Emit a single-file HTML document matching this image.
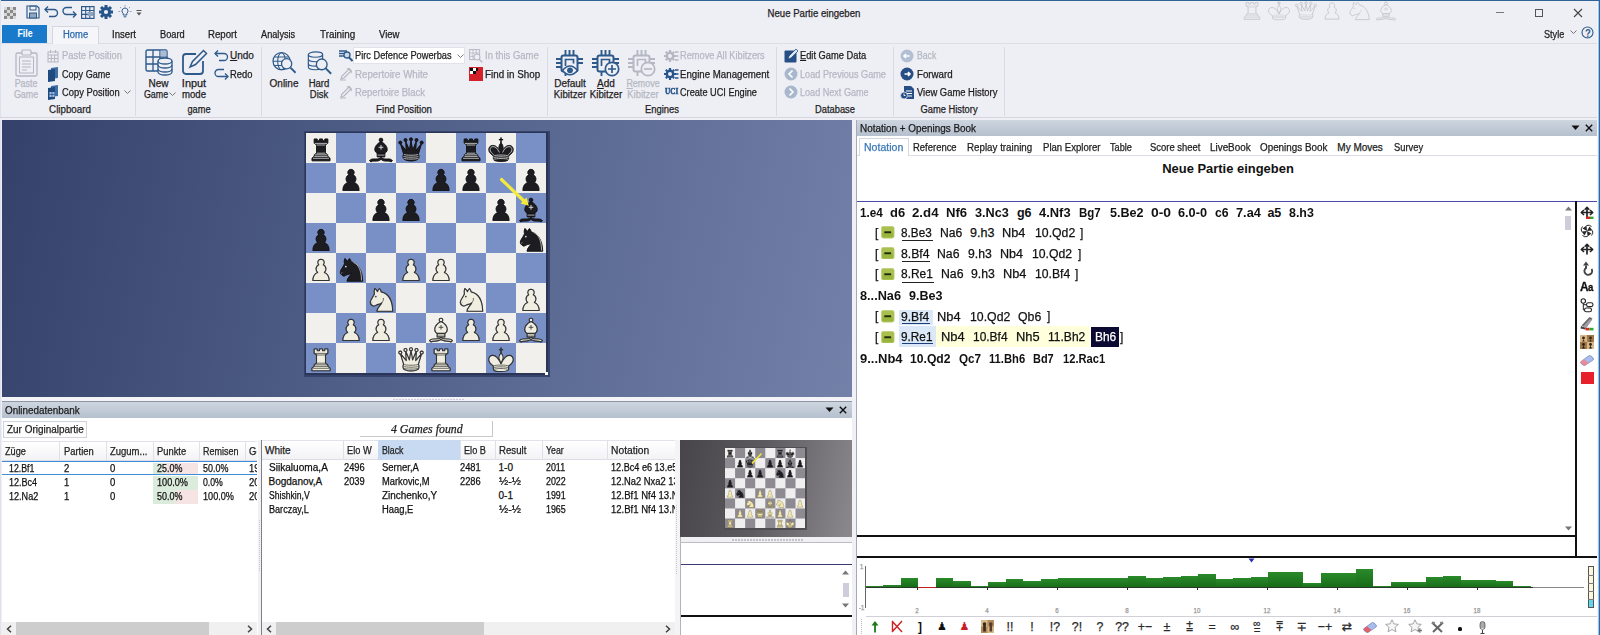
<!DOCTYPE html>
<html><head><meta charset="utf-8"><title>Neue Partie eingeben</title><style>
html,body{margin:0;padding:0;}
body{width:1600px;height:635px;overflow:hidden;position:relative;background:#eeeef5;font-family:"Liberation Sans",sans-serif;}
.t{position:absolute;white-space:nowrap;line-height:16px;height:16px;-webkit-text-stroke:0.25px currentColor;}
.r{position:absolute;display:block;}
.pc{position:absolute;font-family:"DejaVu Sans",sans-serif;text-align:center;}
</style></head><body>
<div class="r" style="left:0px;top:0px;width:1600px;height:635px;background:#eeeef5;"></div>
<div class="r" style="left:0px;top:0px;width:1600px;height:1px;background:#2f6296;"></div>
<div class="r" style="left:0px;top:0px;width:1px;height:635px;background:#dde2ee;"></div>
<svg class="r" style="left:4px;top:7px;" width="12" height="12" viewBox="0 0 12 12"><rect width="12" height="12" fill="#8a8a8a"/><path d="M0 0h3v3h-3zM6 0h3v3h-3zM3 3h3v3h-3zM9 3h3v3h-3zM0 6h3v3h-3zM6 6h3v3h-3zM3 9h3v3h-3zM9 9h3v3h-3z" fill="#d8d8d8"/></svg>
<svg class="r" style="left:26px;top:5px;" width="14" height="14" viewBox="0 0 14 14"><path d="M1 1h10l2 2v10h-12z" fill="none" stroke="#2d5a8a" stroke-width="1.2"/><rect x="4" y="1" width="6" height="4" fill="none" stroke="#2d5a8a" stroke-width="1"/><rect x="3.5" y="8" width="7" height="5" fill="#8fa5c0" stroke="#2d5a8a" stroke-width="1"/></svg>
<svg class="r" style="left:44px;top:6px;" width="15" height="12" viewBox="0 0 15 12"><path d="M1 3.5h9a3.5 3.5 0 0 1 0 7h-5" fill="none" stroke="#2d5a8a" stroke-width="1.4"/><path d="M4 0.5l-3 3l3 3" fill="none" stroke="#2d5a8a" stroke-width="1.4"/></svg>
<svg class="r" style="left:62px;top:6px;" width="15" height="12" viewBox="0 0 15 12"><path d="M10 1.5h-5.5a3.5 3.5 0 0 0 0 7h9" fill="none" stroke="#2d5a8a" stroke-width="1.4"/><path d="M11 5.5l3 3l-3 3" fill="none" stroke="#2d5a8a" stroke-width="1.4"/></svg>
<svg class="r" style="left:81px;top:6px;" width="14" height="13" viewBox="0 0 14 13"><rect x="0.6" y="0.6" width="12.4" height="11.8" fill="none" stroke="#2d5a8a" stroke-width="1.2"/><path d="M4.7 0.6v11.8M8.8 0.6v11.8M0.6 4.5h12.4M0.6 8.4h12.4" stroke="#2d5a8a" stroke-width="1.1"/><rect x="6.5" y="6" width="6" height="4" fill="#8fa5c0"/></svg>
<svg class="r" style="left:99px;top:5px;" width="14" height="14" viewBox="0 0 14 14"><circle cx="7" cy="7" r="3.6" fill="none" stroke="#24548a" stroke-width="3"/><g stroke="#24548a" stroke-width="3"><path d="M7 0v3M7 11v3M0 7h3M11 7h3M2 2l2 2M10 10l2 2M12 2l-2 2M2 12l2-2"/></g></svg>
<svg class="r" style="left:118px;top:5px;" width="14" height="14" viewBox="0 0 14 14"><path d="M7 3a3 3 0 0 1 1.8 5.4v1.6h-3.6v-1.6a3 3 0 0 1 1.8-5.4z" fill="none" stroke="#2d5a8a" stroke-width="1"/><path d="M5.6 11.8h2.8" stroke="#2d5a8a" stroke-width="1"/><path d="M7 0v1.6M2 2l1.2 1.2M12 2l-1.2 1.2M0.5 6.5h1.7M11.8 6.5h1.7" stroke="#8fa5c0" stroke-width="1"/></svg>
<svg class="r" style="left:136px;top:10px;" width="6" height="6" viewBox="0 0 6 6"><path d="M0.5 0.5h5" stroke="#555" stroke-width="1"/><path d="M0.5 2.5h5l-2.5 3z" fill="#555"/></svg>
<span id="t1" class="t" style="left:814px;top:5.58px;font-size:10px;color:#1e1e1e;transform-origin:50% 50%;transform:translateX(-50%) scaleX(0.9588);">Neue Partie eingeben</span>
<svg class="r" style="left:1239px;top:-2.200px" width="26" height="23" viewBox="0 0 30 30" preserveAspectRatio="none"><path d="M6 27.800v-2.600l2.300-2v-1.600l2.200-1.400v-8.400l-2.300-1.600v-4.200h3v1.700h2.300v-1.700h3v1.700h2.300v-1.700h3v4.200l-2.300 1.600v8.400l2.200 1.400v1.600l2.300 2v2.600z" fill="#eeeef5" stroke="#c2c2c8" stroke-width="1" stroke-linejoin="round"/><path d="M8.800 10.400h12.400M10.700 12h8.600M10.700 20.200h8.600M8.600 21.800h12.800M8.400 23.400h13.200M7 25.300h16" fill="none" stroke="#cfcfd4" stroke-width="0.800"/></svg>
<svg class="r" style="left:1266px;top:-2.200px" width="26" height="23" viewBox="0 0 30 30" preserveAspectRatio="none"><path d="M15 4.600v5.400M12.900 6.600h4.200" stroke="#c2c2c8" stroke-width="1.300" fill="none"/><path d="M15 20.800c-2-4.200-4.200-8.400-8.200-8.400c-2.500 0-4 2-4 4.200c0 2.500 2 4.600 4.600 6.400v3.200c0 1.300 3.500 2.300 7.600 2.300s7.600-1 7.600-2.300v-3.200c2.600-1.800 4.600-3.900 4.600-6.400c0-2.200-1.500-4.200-4-4.200c-4 0-6.200 4.200-8.200 8.400z" fill="#eeeef5" stroke="#c2c2c8" stroke-width="1" stroke-linejoin="round"/><path d="M15 9.800c-1.600 1.600-2.100 3.600-2.100 5.600l2.100 5l2.100-5c0-2-0.500-4-2.100-5.600z" fill="#eeeef5" stroke="#c2c2c8" stroke-width="1" stroke-linejoin="round"/><path d="M7.400 23c2.500-1.300 12.700-1.300 15.200 0M7.400 24.800c2.500-1.300 12.700-1.300 15.200 0M7.400 26.500c2.500-1.300 12.700-1.300 15.200 0" fill="none" stroke="#cfcfd4" stroke-width="0.800"/></svg>
<svg class="r" style="left:1293px;top:-2.200px" width="26" height="23" viewBox="0 0 30 30" preserveAspectRatio="none"><path d="M7.600 21L4.400 10.600L10.300 17.600L9.600 8L13.400 17L15 7.300L16.600 17L20.400 8L19.700 17.600L25.600 10.600L22.400 21c0.600 1.400 0.800 2.600 0.400 3.900c0 1.600-3.500 3-7.800 3s-7.800-1.400-7.800-3c-0.400-1.300-0.200-2.500 0.400-3.900z" fill="#eeeef5" stroke="#c2c2c8" stroke-width="1" stroke-linejoin="round"/><circle cx="4.3" cy="9.6" r="1.500" fill="#eeeef5" stroke="#c2c2c8" stroke-width="1"/><circle cx="9.5" cy="7" r="1.500" fill="#eeeef5" stroke="#c2c2c8" stroke-width="1"/><circle cx="15" cy="6.3" r="1.500" fill="#eeeef5" stroke="#c2c2c8" stroke-width="1"/><circle cx="20.5" cy="7" r="1.500" fill="#eeeef5" stroke="#c2c2c8" stroke-width="1"/><circle cx="25.7" cy="9.6" r="1.500" fill="#eeeef5" stroke="#c2c2c8" stroke-width="1"/><path d="M7.800 21.400c2 1.100 12.400 1.100 14.400 0M7.400 23.300c2 1.200 13.200 1.200 15.200 0M7.400 25.200c2 1.200 13.200 1.200 15.200 0" fill="none" stroke="#cfcfd4" stroke-width="0.800"/></svg>
<svg class="r" style="left:1319px;top:-2.200px" width="26" height="23" viewBox="0 0 30 30" preserveAspectRatio="none"><path d="M15 6.300a3.200 3.200 0 0 1 2.200 5.500c1.800 0.900 2.700 2.500 2.700 4.200c0 1.500-0.700 2.700-1.600 3.500c2.800 1.100 4.800 3.500 4.800 8h-16.200c0-4.500 2-6.900 4.800-8c-0.900-0.800-1.600-2-1.600-3.500c0-1.700 0.900-3.300 2.700-4.200a3.200 3.200 0 0 1 2.200-5.500z" fill="#eeeef5" stroke="#c2c2c8" stroke-width="1" stroke-linejoin="round"/></svg>
<svg class="r" style="left:1345.5px;top:-2.200px" width="26" height="23" viewBox="0 0 30 30" preserveAspectRatio="none"><path d="M11 28.200c0.300-3.500 3.500-5.500 4.800-8.400c-1.800 1.600-3.800 1.400-5.300 2.100c-1.200 0.800-2.400 1.600-3.600 0.900c-1.500-0.800-2.800-2.400-2.600-3.800c0.500-2.700 3-5 4.200-8.200c-0.400-1.800-0.300-3.600 0.300-5.200c1.200 0.700 2.100 1.800 2.700 3.100c0.400-1.200 1.100-2.300 2-3.100c0.900 0.900 1.400 2.100 1.600 3.300c6.500 1.500 11.300 8 11.600 19.300z" fill="#eeeef5" stroke="#c2c2c8" stroke-width="1" stroke-linejoin="round"/><circle cx="9.800" cy="13.600" r="0.900" fill="#cfcfd4"/><path d="M6 19.500l-0.500 0.900" stroke="#cfcfd4" stroke-width="0.800"/><path d="M15.800 19.800c1.200-1.400 1.800-3 1.600-4.800" fill="none" stroke="#cfcfd4" stroke-width="0.800"/></svg>
<svg class="r" style="left:1372.5px;top:-2.200px" width="26" height="23" viewBox="0 0 30 30" preserveAspectRatio="none"><path d="M15 24.300c-2 2.200-5 1.700-7.500 1.700c-1.600 0-3.100 0.500-3.900 1.600l1.300 1.400c1-0.900 2.500-0.900 4-0.900c2.600 0 4.900-0.300 6.100-1.900c1.200 1.600 3.500 1.900 6.100 1.900c1.500 0 3 0 4 0.900l1.300-1.400c-0.800-1.100-2.300-1.600-3.900-1.600c-2.500 0-5.500 0.500-7.500-1.700z" fill="#eeeef5" stroke="#c2c2c8" stroke-width="1" stroke-linejoin="round"/><path d="M11.200 20.300h7.600v3.600h-7.600z" fill="#eeeef5" stroke="#c2c2c8" stroke-width="1" stroke-linejoin="round"/><path d="M15 8.600c-4.200 2.200-6.200 5.400-6.200 7.800c0 2 1.300 3.300 2.800 4h6.800c1.500-0.700 2.800-2 2.800-4c0-2.400-2-5.600-6.200-7.800z" fill="#eeeef5" stroke="#c2c2c8" stroke-width="1" stroke-linejoin="round"/><circle cx="15" cy="7" r="1.800" fill="#eeeef5" stroke="#c2c2c8" stroke-width="1"/><path d="M15 12v4.600M12.700 14.300h4.600" stroke="#cfcfd4" stroke-width="1"/><path d="M11.500 22.100h7" stroke="#cfcfd4" stroke-width="0.700"/></svg>
<div class="r" style="left:1496px;top:12px;width:8px;height:1px;background:#777;"></div>
<div class="r" style="left:1535px;top:9px;width:8px;height:8px;background:transparent;border:1px solid #555;box-sizing:border-box;"></div>
<svg class="r" style="left:1573px;top:8px;" width="10" height="10" viewBox="0 0 10 10"><path d="M1 1l8 8M9 1l-8 8" stroke="#444" stroke-width="1.1"/></svg>
<div class="r" style="left:0px;top:43px;width:1600px;height:1px;background:#dcdde6;"></div>
<div class="r" style="left:2px;top:25px;width:45px;height:17.5px;background:#1979ca;"></div>
<span id="t2" class="t" style="left:25px;top:25.59px;font-size:10px;color:#fff;font-weight:bold;-webkit-text-stroke:0;transform-origin:50% 50%;transform:translateX(-50%) scaleX(0.8824);">File</span>
<div class="r" style="left:52px;top:26px;width:47px;height:18px;background:#f5f5fa;border:1px solid #d5d6e0;border-bottom:none;box-sizing:border-box;"></div>
<span id="t3" class="t" style="left:63px;top:26.59px;font-size:10px;color:#2a6ab0;transform-origin:0 50%;transform:scaleX(0.9444);">Home</span>
<span id="t4" class="t" style="left:111.5px;top:26.59px;font-size:10px;color:#1e1e1e;transform-origin:0 50%;transform:scaleX(0.9600);">Insert</span>
<span id="t5" class="t" style="left:159.5px;top:26.59px;font-size:10px;color:#1e1e1e;transform-origin:0 50%;transform:scaleX(0.9259);">Board</span>
<span id="t6" class="t" style="left:207.5px;top:26.59px;font-size:10px;color:#1e1e1e;transform-origin:0 50%;transform:scaleX(0.9667);">Report</span>
<span id="t7" class="t" style="left:261px;top:26.59px;font-size:10px;color:#1e1e1e;transform-origin:0 50%;transform:scaleX(0.9189);">Analysis</span>
<span id="t8" class="t" style="left:320px;top:26.59px;font-size:10px;color:#1e1e1e;transform-origin:0 50%;transform:scaleX(0.9861);">Training</span>
<span id="t9" class="t" style="left:379px;top:26.59px;font-size:10px;color:#1e1e1e;transform-origin:0 50%;transform:scaleX(0.9545);">View</span>
<span id="t10" class="t" style="left:1544px;top:26.59px;font-size:10px;color:#1e1e1e;transform-origin:0 50%;transform:scaleX(0.9091);">Style</span>
<svg class="r" style="left:1570px;top:30px;" width="7" height="5" viewBox="0 0 7 5"><path d="M0.5 0.5l3 3l3-3" fill="none" stroke="#777" stroke-width="1"/></svg>
<svg class="r" style="left:1581px;top:26px;" width="13" height="13" viewBox="0 0 13 13"><circle cx="6.5" cy="6.5" r="5.5" fill="none" stroke="#2d5a8a" stroke-width="1.1"/></svg>
<span id="t11" class="t" style="left:1587.5px;top:25.59px;font-size:10px;color:#2d5a8a;font-weight:bold;-webkit-text-stroke:0;transform-origin:50% 50%;transform:translateX(-50%) scaleX(0.9500);">?</span>
<div class="r" style="left:0px;top:117px;width:1600px;height:1px;background:#d4d5de;"></div>
<div class="r" style="left:0px;top:118px;width:1600px;height:2px;background:#f0eff6;"></div>
<div class="r" style="left:135px;top:47px;width:1px;height:69px;background:#d9dae3;"></div>
<div class="r" style="left:261px;top:47px;width:1px;height:69px;background:#d9dae3;"></div>
<div class="r" style="left:547px;top:47px;width:1px;height:69px;background:#d9dae3;"></div>
<div class="r" style="left:776px;top:47px;width:1px;height:69px;background:#d9dae3;"></div>
<div class="r" style="left:893px;top:47px;width:1px;height:69px;background:#d9dae3;"></div>
<div class="r" style="left:1004px;top:47px;width:1px;height:69px;background:#d9dae3;"></div>
<svg class="r" style="left:15px;top:49px;" width="23" height="28" viewBox="0 0 23 28"><rect x="1" y="4" width="21" height="23" rx="1.5" fill="none" stroke="#b4b8c2" stroke-width="1.3"/><rect x="7" y="1" width="9" height="5" rx="1" fill="#eeeef5" stroke="#b4b8c2" stroke-width="1.2"/><rect x="4.5" y="8" width="14" height="16" fill="none" stroke="#b4b8c2" stroke-width="1"/><path d="M7 12h9M7 15h9M7 18h9M7 21h5" stroke="#b4b8c2" stroke-width="1"/></svg>
<span id="t12" class="t" style="left:25.5px;top:75.58px;font-size:10px;color:#b4b8c2;transform-origin:50% 50%;transform:translateX(-50%) scaleX(0.8846);">Paste</span>
<span id="t13" class="t" style="left:25.5px;top:86.58px;font-size:10px;color:#b4b8c2;transform-origin:50% 50%;transform:translateX(-50%) scaleX(0.8889);">Game</span>
<svg class="r" style="left:47px;top:49px;" width="12" height="14" viewBox="0 0 12 14"><rect x="1" y="3" width="10" height="10" fill="none" stroke="#b4b8c2" stroke-width="1"/><path d="M1 6h10M4.3 6v7M7.6 6v7M1 9.5h10M3.5 1v3M8.5 1v3" stroke="#b4b8c2" stroke-width="1"/></svg>
<span id="t14" class="t" style="left:62px;top:47.58px;font-size:10px;color:#b4b8c2;transform-origin:0 50%;transform:scaleX(0.9375);">Paste Position</span>
<svg class="r" style="left:47px;top:67px;" width="12" height="15" viewBox="0 0 12 15"><path d="M4 1l7-1v11l-7 1z" fill="#3f6ea5"/><path d="M1 3l7-1v12l-7 1z" fill="#1f4a80"/></svg>
<span id="t15" class="t" style="left:62px;top:66.58px;font-size:10px;color:#1e1e1e;transform-origin:0 50%;transform:scaleX(0.9057);">Copy Game</span>
<svg class="r" style="left:47px;top:85px;" width="12" height="15" viewBox="0 0 12 15"><path d="M4 1l7-1v11l-7 1z" fill="#3f6ea5"/><path d="M1 3l7-1v12l-7 1z" fill="#1f4a80"/><rect x="2.5" y="7" width="5" height="5" fill="#9fc0e8"/><path d="M2.5 9.5h5M5 7v5" stroke="#1f4a80" stroke-width="0.7"/></svg>
<span id="t16" class="t" style="left:62px;top:84.58px;font-size:10px;color:#1e1e1e;transform-origin:0 50%;transform:scaleX(0.9355);">Copy Position</span>
<svg class="r" style="left:124px;top:90px;" width="7" height="5" viewBox="0 0 7 5"><path d="M0.5 0.5l3 3l3-3" fill="none" stroke="#777" stroke-width="1"/></svg>
<span id="t17" class="t" style="left:70px;top:101.58px;font-size:10px;color:#1e1e1e;transform-origin:50% 50%;transform:translateX(-50%) scaleX(0.9767);">Clipboard</span>
<svg class="r" style="left:145px;top:49px;" width="28" height="28" viewBox="0 0 28 28"><rect x="1" y="1" width="21" height="21" rx="1.5" fill="none" stroke="#2d5a8a" stroke-width="1.4"/><path d="M8 1v21M15 1v10M1 8h21M1 15h12" stroke="#2d5a8a" stroke-width="1.3"/><rect x="15.5" y="1.5" width="6" height="6" fill="#a9bdd6"/><path d="M13 12v11a7 3 0 0 0 14 0v-11" fill="#eeeef5" stroke="#2d5a8a" stroke-width="1.3"/><ellipse cx="20" cy="12" rx="7" ry="3" fill="#eeeef5" stroke="#2d5a8a" stroke-width="1.3"/><path d="M13 16a7 3 0 0 0 14 0M13 20a7 3 0 0 0 14 0" fill="none" stroke="#2d5a8a" stroke-width="1.3"/></svg>
<span id="t18" class="t" style="left:158.5px;top:75.58px;font-size:10px;color:#1e1e1e;transform-origin:50% 50%;transform:translateX(-50%) scaleX(1.0000);">New</span>
<span id="t19" class="t" style="left:155.5px;top:86.58px;font-size:10px;color:#1e1e1e;transform-origin:50% 50%;transform:translateX(-50%) scaleX(0.8889);">Game</span>
<svg class="r" style="left:169px;top:92px;" width="7" height="5" viewBox="0 0 7 5"><path d="M0.5 0.5l3 3l3-3" fill="none" stroke="#777" stroke-width="1"/></svg>
<svg class="r" style="left:181px;top:49px;" width="27" height="28" viewBox="0 0 27 28"><path d="M22 12v10a3 3 0 0 1-3 3h-14a3 3 0 0 1-3-3v-14a3 3 0 0 1 3-3h10" fill="none" stroke="#2d5a8a" stroke-width="1.8"/><path d="M9 18l2.5-5.5l11-11l3 3l-11 11z" fill="#eeeef5" stroke="#2d5a8a" stroke-width="1.5"/></svg>
<span id="t20" class="t" style="left:194px;top:75.58px;font-size:10px;color:#1e1e1e;transform-origin:50% 50%;transform:translateX(-50%) scaleX(1.0909);">Input</span>
<span id="t21" class="t" style="left:194px;top:86.58px;font-size:10px;color:#1e1e1e;transform-origin:50% 50%;transform:translateX(-50%) scaleX(0.9600);">mode</span>
<svg class="r" style="left:214px;top:50px;" width="15" height="12" viewBox="0 0 15 12"><path d="M1 3.5h9a3.5 3.5 0 0 1 0 7h-5" fill="none" stroke="#2d5a8a" stroke-width="1.3"/><path d="M4 0.5l-3 3l3 3" fill="none" stroke="#2d5a8a" stroke-width="1.3"/></svg>
<span id="t22" class="t" style="left:230px;top:47.58px;font-size:10px;color:#1e1e1e;transform-origin:0 50%;transform:scaleX(1.0000);"><u>U</u>ndo</span>
<svg class="r" style="left:214px;top:68px;" width="15" height="12" viewBox="0 0 15 12"><path d="M10 1.5h-5.500a3.500 3.500 0 0 0 0 7h9" fill="none" stroke="#2d5a8a" stroke-width="1.300"/><path d="M11 5.500l3 3l-3 3" fill="none" stroke="#2d5a8a" stroke-width="1.300"/></svg>
<span id="t23" class="t" style="left:230px;top:66.58px;font-size:10px;color:#1e1e1e;transform-origin:0 50%;transform:scaleX(0.9375);">Redo</span>
<span id="t24" class="t" style="left:198.5px;top:101.58px;font-size:10px;color:#1e1e1e;transform-origin:50% 50%;transform:translateX(-50%) scaleX(0.9200);">game</span>
<svg class="r" style="left:270.5px;top:51px;" width="27" height="23" viewBox="0 0 29 27"><circle cx="11" cy="12" r="10" fill="none" stroke="#2d5a8a" stroke-width="1.4"/><ellipse cx="11" cy="12" rx="4.5" ry="10" fill="none" stroke="#2d5a8a" stroke-width="1.2"/><path d="M1 12h20M2.500 7h17M2.500 17h17" stroke="#2d5a8a" stroke-width="1.2"/><circle cx="17" cy="15" r="6" fill="#eeeef5" stroke="#2d5a8a" stroke-width="1.5"/><path d="M21.500 19.500l6 6" stroke="#2d5a8a" stroke-width="2.200"/></svg>
<span id="t25" class="t" style="left:284px;top:75.58px;font-size:10px;color:#1e1e1e;transform-origin:50% 50%;transform:translateX(-50%) scaleX(1.0000);">Online</span>
<svg class="r" style="left:306px;top:50.5px;" width="27" height="25" viewBox="0 0 29 28"><path d="M2 4v14a8 3 0 0 0 16 0v-14" fill="none" stroke="#2d5a8a" stroke-width="1.3"/><ellipse cx="10" cy="4" rx="8" ry="3" fill="none" stroke="#2d5a8a" stroke-width="1.3"/><path d="M2 9a8 3 0 0 0 16 0M2 14a8 3 0 0 0 16 0" fill="none" stroke="#2d5a8a" stroke-width="1.3"/><circle cx="17" cy="15" r="6" fill="#eeeef5" stroke="#2d5a8a" stroke-width="1.5"/><path d="M21.500 19.500l6 6" stroke="#2d5a8a" stroke-width="2.200"/></svg>
<span id="t26" class="t" style="left:319px;top:75.58px;font-size:10px;color:#1e1e1e;transform-origin:50% 50%;transform:translateX(-50%) scaleX(0.9545);">Hard</span>
<span id="t27" class="t" style="left:319px;top:86.58px;font-size:10px;color:#1e1e1e;transform-origin:50% 50%;transform:translateX(-50%) scaleX(0.9474);">Disk</span>
<svg class="r" style="left:338px;top:49px;" width="15" height="13" viewBox="0 0 15 13"><path d="M1 2h8M1 4.500h8M1 7h5" stroke="#2d5a8a" stroke-width="1.500"/><circle cx="9" cy="6" r="3" fill="#cfd8e6" stroke="#2d5a8a" stroke-width="1.300"/><path d="M11 8.500l3.500 3.500" stroke="#2d5a8a" stroke-width="2"/></svg>
<div class="r" style="left:353px;top:47px;width:112px;height:17px;background:#fff;border:1px solid #e1e2ea;box-sizing:border-box;"></div>
<span id="t28" class="t" style="left:355px;top:47.58px;font-size:10px;color:#1e1e1e;transform-origin:0 50%;transform:scaleX(0.9238);">Pirc Defence Powerbas</span>
<svg class="r" style="left:457px;top:54px;" width="7" height="5" viewBox="0 0 7 5"><path d="M0.5 0.5l3 3l3-3" fill="none" stroke="#777" stroke-width="1"/></svg>
<svg class="r" style="left:339px;top:67px;" width="14" height="14" viewBox="0 0 14 14"><path d="M2 12l3-1l7-7l-2-2l-7 7z" fill="none" stroke="#b4b8c2" stroke-width="1.200"/><path d="M8 2a3 3 0 0 1 4 4" fill="none" stroke="#b4b8c2" stroke-width="1.200"/><path d="M1 13h6" stroke="#b4b8c2" stroke-width="1"/></svg>
<span id="t29" class="t" style="left:355px;top:66.58px;font-size:10px;color:#b4b8c2;transform-origin:0 50%;transform:scaleX(0.9733);">Repertoire White</span>
<svg class="r" style="left:339px;top:85px;" width="14" height="14" viewBox="0 0 14 14"><path d="M2 12l3-1l7-7l-2-2l-7 7z" fill="none" stroke="#b4b8c2" stroke-width="1.200"/><path d="M8 2a3 3 0 0 1 4 4" fill="none" stroke="#b4b8c2" stroke-width="1.200"/><path d="M1 13h6" stroke="#b4b8c2" stroke-width="1"/></svg>
<span id="t30" class="t" style="left:355px;top:84.58px;font-size:10px;color:#b4b8c2;transform-origin:0 50%;transform:scaleX(0.9459);">Repertoire Black</span>
<svg class="r" style="left:469px;top:49px;" width="14" height="14" viewBox="0 0 14 14"><rect x="0.600" y="0.600" width="10" height="10" fill="none" stroke="#b4b8c2" stroke-width="1"/><path d="M4 0.600v10M7.300 0.600v10M0.600 4h10M0.600 7.300h10" stroke="#b4b8c2" stroke-width="0.800"/><circle cx="8" cy="8" r="3" fill="#eeeef5" stroke="#b4b8c2" stroke-width="1"/><path d="M10.200 10.200l3 3" stroke="#b4b8c2" stroke-width="1.300"/></svg>
<span id="t31" class="t" style="left:485px;top:47.58px;font-size:10px;color:#b4b8c2;transform-origin:0 50%;transform:scaleX(0.9474);">In this Game</span>
<svg class="r" style="left:469px;top:67px;" width="14" height="14" viewBox="0 0 14 14"><rect width="14" height="14" fill="#d3202a"/><path d="M1 1h3v3h-3zM4 4h3v3h-3zM7 1h2v3h-2z" fill="#111"/><path d="M4 1h3v3h-3zM1 4h3v3h-3z" fill="#fff"/></svg>
<span id="t32" class="t" style="left:485px;top:66.58px;font-size:10px;color:#1e1e1e;transform-origin:0 50%;transform:scaleX(0.9821);">Find in Shop</span>
<span id="t33" class="t" style="left:404px;top:101.58px;font-size:10px;color:#1e1e1e;transform-origin:50% 50%;transform:translateX(-50%) scaleX(0.9655);">Find Position</span>
<svg class="r" style="left:556px;top:49px;" width="29" height="28" viewBox="0 0 29 28"><rect x="5.500" y="6.500" width="16" height="16" rx="2" fill="none" stroke="#2d5a8a" stroke-width="2"/><path d="M9.500 1v5M13.500 1v5M17.500 1v5M0 10h5M0 14h5M0 18h5M22 10h5M22 14h5M9.500 23v4" stroke="#2d5a8a" stroke-width="1.900"/><path d="M9.500 17v-6.500h8v4" fill="none" stroke="#2d5a8a" stroke-width="1.700"/><path d="M6.500 21.500q7.500-9 15 0q-7.500 8.500-15 0z" fill="#eeeef5" stroke="#2d5a8a" stroke-width="1.700"/><circle cx="14" cy="21.300" r="2.900" fill="#2d5a8a"/></svg>
<span id="t34" class="t" style="left:570px;top:75.58px;font-size:10px;color:#1e1e1e;transform-origin:50% 50%;transform:translateX(-50%) scaleX(1.0000);">Default</span>
<span id="t35" class="t" style="left:570px;top:86.58px;font-size:10px;color:#1e1e1e;transform-origin:50% 50%;transform:translateX(-50%) scaleX(0.9697);">Kibitzer</span>
<svg class="r" style="left:592px;top:49px;" width="29" height="28" viewBox="0 0 29 28"><rect x="5.500" y="6.500" width="16" height="16" rx="2" fill="none" stroke="#2d5a8a" stroke-width="2"/><path d="M9.500 1v5M13.500 1v5M17.500 1v5M0 10h5M0 14h5M0 18h5M22 10h5M22 14h5M9.500 23v4" stroke="#2d5a8a" stroke-width="1.900"/><path d="M9.500 17v-6.500h8v4" fill="none" stroke="#2d5a8a" stroke-width="1.700"/><circle cx="20" cy="20" r="6.700" fill="#eeeef5" stroke="#2d5a8a" stroke-width="1.700"/><path d="M16 20h8M20 16v8" stroke="#2d5a8a" stroke-width="1.700"/></svg>
<span id="t36" class="t" style="left:606px;top:75.58px;font-size:10px;color:#1e1e1e;transform-origin:50% 50%;transform:translateX(-50%) scaleX(1.0000);"><u>A</u>dd</span>
<span id="t37" class="t" style="left:606px;top:86.58px;font-size:10px;color:#1e1e1e;transform-origin:50% 50%;transform:translateX(-50%) scaleX(0.9697);">Kibitzer</span>
<svg class="r" style="left:628px;top:49px;" width="29" height="28" viewBox="0 0 29 28"><rect x="5.500" y="6.500" width="16" height="16" rx="2" fill="none" stroke="#b4b8c2" stroke-width="2"/><path d="M9.500 1v5M13.500 1v5M17.500 1v5M0 10h5M0 14h5M0 18h5M22 10h5M22 14h5M9.500 23v4" stroke="#b4b8c2" stroke-width="1.900"/><path d="M9.500 17v-6.500h8v4" fill="none" stroke="#b4b8c2" stroke-width="1.700"/><circle cx="20" cy="20" r="6.700" fill="#eeeef5" stroke="#b4b8c2" stroke-width="1.700"/><path d="M16 20h8" stroke="#b4b8c2" stroke-width="1.700"/></svg>
<span id="t38" class="t" style="left:642.5px;top:75.58px;font-size:10px;color:#b4b8c2;transform-origin:50% 50%;transform:translateX(-50%) scaleX(0.8919);"><u>R</u>emove</span>
<span id="t39" class="t" style="left:642.5px;top:86.58px;font-size:10px;color:#b4b8c2;transform-origin:50% 50%;transform:translateX(-50%) scaleX(0.9394);">Kibitzer</span>
<svg class="r" style="left:664px;top:49px;" width="15" height="14" viewBox="0 0 15 14"><circle cx="6" cy="7" r="3.200" fill="none" stroke="#b4b8c2" stroke-width="2.400"/><path d="M6 1v2M6 11v2M0 7h2M10 7h2M1.800 2.800l1.400 1.400M8.800 9.800l1.400 1.400M10.200 2.800l-1.400 1.400M1.800 11.200l1.400-1.400" stroke="#b4b8c2" stroke-width="2.200"/><path d="M11 3h3.500M11.500 7h3M11 11h3.500" stroke="#b4b8c2" stroke-width="1.600"/></svg>
<span id="t40" class="t" style="left:680px;top:47.58px;font-size:10px;color:#b4b8c2;transform-origin:0 50%;transform:scaleX(0.9239);">Remove All Kibitzers</span>
<svg class="r" style="left:664px;top:67px;" width="15" height="14" viewBox="0 0 15 14"><circle cx="6" cy="7" r="3.200" fill="none" stroke="#24548a" stroke-width="2.400"/><path d="M6 1v2M6 11v2M0 7h2M10 7h2M1.800 2.800l1.400 1.400M8.800 9.800l1.400 1.400M10.200 2.800l-1.400 1.400M1.800 11.200l1.400-1.400" stroke="#24548a" stroke-width="2.200"/><path d="M11 3h3.500M11.500 7h3M11 11h3.500" stroke="#24548a" stroke-width="1.600"/></svg>
<span id="t41" class="t" style="left:680px;top:66.58px;font-size:10px;color:#1e1e1e;transform-origin:0 50%;transform:scaleX(0.9674);">Engine Management</span>
<span id="t42" class="t" style="left:664.5px;top:84.28px;font-size:8px;color:#24548a;font-weight:bold;-webkit-text-stroke:0;transform-origin:0 50%;transform:scaleX(0.9000);font-family:'Liberation Serif',serif;-webkit-text-stroke:0.500px #24548a;">UCI</span>
<span id="t43" class="t" style="left:680px;top:84.58px;font-size:10px;color:#1e1e1e;transform-origin:0 50%;transform:scaleX(0.9167);">Create UCI Engine</span>
<span id="t44" class="t" style="left:662px;top:101.58px;font-size:10px;color:#1e1e1e;transform-origin:50% 50%;transform:translateX(-50%) scaleX(0.9444);">Engines</span>
<svg class="r" style="left:784px;top:49px;" width="14" height="14" viewBox="0 0 14 14"><rect x="0.500" y="1.500" width="12" height="12" rx="1" fill="#274f86"/><path d="M4 10l1-3l7-7l2 2l-7 7z" fill="#dfe7f3" stroke="#274f86" stroke-width="0.800"/></svg>
<span id="t45" class="t" style="left:800px;top:47.58px;font-size:10px;color:#1e1e1e;transform-origin:0 50%;transform:scaleX(0.9296);"><u>E</u>dit Game Data</span>
<svg class="r" style="left:784px;top:67px;" width="14" height="14" viewBox="0 0 14 14"><circle cx="7" cy="7" r="6.500" fill="#a9b7cc"/><path d="M8.500 3.500l-3.500 3.500l3.500 3.500" fill="none" stroke="#fff" stroke-width="1.600"/></svg>
<span id="t46" class="t" style="left:800px;top:66.58px;font-size:10px;color:#b4b8c2;transform-origin:0 50%;transform:scaleX(0.9149);">Load Previous Game</span>
<svg class="r" style="left:784px;top:85px;" width="14" height="14" viewBox="0 0 14 14"><circle cx="7" cy="7" r="6.500" fill="#a9b7cc"/><path d="M5.500 3.500l3.500 3.500l-3.500 3.500" fill="none" stroke="#fff" stroke-width="1.600"/></svg>
<span id="t47" class="t" style="left:800px;top:84.58px;font-size:10px;color:#b4b8c2;transform-origin:0 50%;transform:scaleX(0.9079);">Load Next Game</span>
<span id="t48" class="t" style="left:835px;top:101.58px;font-size:10px;color:#1e1e1e;transform-origin:50% 50%;transform:translateX(-50%) scaleX(0.9302);">Database</span>
<svg class="r" style="left:900px;top:49px;" width="14" height="14" viewBox="0 0 14 14"><circle cx="7" cy="7" r="6.500" fill="#b3c0d3"/><path d="M4.500 7h5M6 5l-2 2l2 2" fill="none" stroke="#fff" stroke-width="1.600"/></svg>
<span id="t49" class="t" style="left:917px;top:47.58px;font-size:10px;color:#b4b8c2;transform-origin:0 50%;transform:scaleX(0.8636);">Back</span>
<svg class="r" style="left:900px;top:67px;" width="14" height="14" viewBox="0 0 14 14"><circle cx="7" cy="7" r="6.500" fill="#274f86"/><path d="M4.500 7h5M8 5l2 2l-2 2" fill="none" stroke="#fff" stroke-width="1.600"/></svg>
<span id="t50" class="t" style="left:917px;top:66.58px;font-size:10px;color:#1e1e1e;transform-origin:0 50%;transform:scaleX(0.9730);">Forward</span>
<svg class="r" style="left:900px;top:85px;" width="15" height="15" viewBox="0 0 15 15"><path d="M4 1h7l3 3v10h-10z" fill="#274f86"/><path d="M6 6h6M6 8.500h6M8 11h4" stroke="#fff" stroke-width="1"/><circle cx="4" cy="10.500" r="3.500" fill="#274f86" stroke="#eeeef5" stroke-width="0.800"/><path d="M4 8.500v2h1.500" stroke="#fff" stroke-width="0.900" fill="none"/></svg>
<span id="t51" class="t" style="left:917px;top:84.58px;font-size:10px;color:#1e1e1e;transform-origin:0 50%;transform:scaleX(0.9412);">View Game History</span>
<span id="t52" class="t" style="left:948.5px;top:101.58px;font-size:10px;color:#1e1e1e;transform-origin:50% 50%;transform:translateX(-50%) scaleX(0.9344);">Game History</span>
<div class="r" style="left:2px;top:120px;width:850px;height:276.5px;background:linear-gradient(102deg,#34426b 0%,#4b5a82 36%,#5e6d96 68%,#7381a9 100%);"></div>
<div class="r" style="left:852px;top:120px;width:5px;height:515px;background:#f0f0f6;"></div>
<div class="r" style="left:2px;top:396.5px;width:850px;height:5.5px;background:#f3f3f8;"></div>
<div class="r" style="left:393px;top:398.5px;width:1.5px;height:1.5px;background:#c9ccd6;"></div>
<div class="r" style="left:396px;top:398.5px;width:1.5px;height:1.5px;background:#c9ccd6;"></div>
<div class="r" style="left:399px;top:398.5px;width:1.5px;height:1.5px;background:#c9ccd6;"></div>
<div class="r" style="left:402px;top:398.5px;width:1.5px;height:1.5px;background:#c9ccd6;"></div>
<div class="r" style="left:405px;top:398.5px;width:1.5px;height:1.5px;background:#c9ccd6;"></div>
<div class="r" style="left:408px;top:398.5px;width:1.5px;height:1.5px;background:#c9ccd6;"></div>
<div class="r" style="left:411px;top:398.5px;width:1.5px;height:1.5px;background:#c9ccd6;"></div>
<div class="r" style="left:414px;top:398.5px;width:1.5px;height:1.5px;background:#c9ccd6;"></div>
<div class="r" style="left:417px;top:398.5px;width:1.5px;height:1.5px;background:#c9ccd6;"></div>
<div class="r" style="left:420px;top:398.5px;width:1.5px;height:1.5px;background:#c9ccd6;"></div>
<div class="r" style="left:423px;top:398.5px;width:1.5px;height:1.5px;background:#c9ccd6;"></div>
<div class="r" style="left:426px;top:398.5px;width:1.5px;height:1.5px;background:#c9ccd6;"></div>
<div class="r" style="left:429px;top:398.5px;width:1.5px;height:1.5px;background:#c9ccd6;"></div>
<div class="r" style="left:432px;top:398.5px;width:1.5px;height:1.5px;background:#c9ccd6;"></div>
<div class="r" style="left:435px;top:398.5px;width:1.5px;height:1.5px;background:#c9ccd6;"></div>
<div class="r" style="left:438px;top:398.5px;width:1.5px;height:1.5px;background:#c9ccd6;"></div>
<div class="r" style="left:441px;top:398.5px;width:1.5px;height:1.5px;background:#c9ccd6;"></div>
<div class="r" style="left:444px;top:398.5px;width:1.5px;height:1.5px;background:#c9ccd6;"></div>
<div class="r" style="left:447px;top:398.5px;width:1.5px;height:1.5px;background:#c9ccd6;"></div>
<div class="r" style="left:450px;top:398.5px;width:1.5px;height:1.5px;background:#c9ccd6;"></div>
<div class="r" style="left:453px;top:398.5px;width:1.5px;height:1.5px;background:#c9ccd6;"></div>
<div class="r" style="left:456px;top:398.5px;width:1.5px;height:1.5px;background:#c9ccd6;"></div>
<div class="r" style="left:459px;top:398.5px;width:1.5px;height:1.5px;background:#c9ccd6;"></div>
<div class="r" style="left:462px;top:398.5px;width:1.5px;height:1.5px;background:#c9ccd6;"></div>
<div class="r" style="left:304px;top:131px;width:246px;height:246px;background:#36436b;"></div>
<div class="r" style="left:305px;top:132px;width:243px;height:243px;background:#2a3558;"></div>
<div class="r" style="left:306px;top:133px;width:240px;height:240px;background:#f1f0ed;"></div>
<svg class="r" style="left:306px;top:133px;" width="240" height="240" viewBox="0 0 240 240"><g fill="#7990c7"><rect x="30" y="0" width="30" height="30"/><rect x="90" y="0" width="30" height="30"/><rect x="150" y="0" width="30" height="30"/><rect x="210" y="0" width="30" height="30"/><rect x="0" y="30" width="30" height="30"/><rect x="60" y="30" width="30" height="30"/><rect x="120" y="30" width="30" height="30"/><rect x="180" y="30" width="30" height="30"/><rect x="30" y="60" width="30" height="30"/><rect x="90" y="60" width="30" height="30"/><rect x="150" y="60" width="30" height="30"/><rect x="210" y="60" width="30" height="30"/><rect x="0" y="90" width="30" height="30"/><rect x="60" y="90" width="30" height="30"/><rect x="120" y="90" width="30" height="30"/><rect x="180" y="90" width="30" height="30"/><rect x="30" y="120" width="30" height="30"/><rect x="90" y="120" width="30" height="30"/><rect x="150" y="120" width="30" height="30"/><rect x="210" y="120" width="30" height="30"/><rect x="0" y="150" width="30" height="30"/><rect x="60" y="150" width="30" height="30"/><rect x="120" y="150" width="30" height="30"/><rect x="180" y="150" width="30" height="30"/><rect x="30" y="180" width="30" height="30"/><rect x="90" y="180" width="30" height="30"/><rect x="150" y="180" width="30" height="30"/><rect x="210" y="180" width="30" height="30"/><rect x="0" y="210" width="30" height="30"/><rect x="60" y="210" width="30" height="30"/><rect x="120" y="210" width="30" height="30"/><rect x="180" y="210" width="30" height="30"/></g></svg>
<svg class="r" style="left:306px;top:133px;filter:drop-shadow(0.800px 0.800px 0.700px rgba(0,0,0,0.450));" width="30" height="30" viewBox="0 0 30 30"><path d="M6 27.800v-2.600l2.300-2v-1.600l2.200-1.400v-8.400l-2.300-1.600v-4.200h3v1.700h2.300v-1.700h3v1.700h2.300v-1.700h3v4.200l-2.300 1.600v8.400l2.200 1.400v1.600l2.300 2v2.600z" fill="#1d1d21" stroke="#101013" stroke-width="0.8" stroke-linejoin="round"/><path d="M8.800 10.400h12.400M10.700 12h8.600M10.700 20.200h8.600M8.600 21.800h12.800M8.400 23.400h13.200M7 25.300h16" fill="none" stroke="#d8d8d8" stroke-width="0.800"/></svg>
<svg class="r" style="left:366px;top:133px;filter:drop-shadow(0.800px 0.800px 0.700px rgba(0,0,0,0.450));" width="30" height="30" viewBox="0 0 30 30"><path d="M15 24.300c-2 2.200-5 1.700-7.500 1.700c-1.600 0-3.100 0.500-3.900 1.600l1.300 1.400c1-0.900 2.500-0.900 4-0.900c2.600 0 4.900-0.300 6.100-1.900c1.200 1.600 3.500 1.900 6.100 1.900c1.500 0 3 0 4 0.900l1.300-1.400c-0.800-1.100-2.300-1.600-3.900-1.600c-2.500 0-5.500 0.500-7.500-1.700z" fill="#1d1d21" stroke="#101013" stroke-width="0.8" stroke-linejoin="round"/><path d="M11.200 20.300h7.600v3.600h-7.600z" fill="#1d1d21" stroke="#101013" stroke-width="0.8" stroke-linejoin="round"/><path d="M15 8.600c-4.200 2.200-6.200 5.400-6.200 7.800c0 2 1.300 3.300 2.800 4h6.800c1.500-0.700 2.800-2 2.800-4c0-2.400-2-5.600-6.200-7.800z" fill="#1d1d21" stroke="#101013" stroke-width="0.8" stroke-linejoin="round"/><circle cx="15" cy="7" r="1.800" fill="#1d1d21" stroke="#101013" stroke-width="0.8"/><path d="M15 12v4.600M12.700 14.300h4.600" stroke="#d8d8d8" stroke-width="1"/><path d="M11.500 22.100h7" stroke="#d8d8d8" stroke-width="0.700"/></svg>
<svg class="r" style="left:396px;top:133px;filter:drop-shadow(0.800px 0.800px 0.700px rgba(0,0,0,0.450));" width="30" height="30" viewBox="0 0 30 30"><path d="M7.600 21L4.400 10.600L10.300 17.600L9.600 8L13.400 17L15 7.300L16.600 17L20.400 8L19.700 17.600L25.600 10.600L22.400 21c0.600 1.400 0.800 2.600 0.400 3.900c0 1.600-3.500 3-7.800 3s-7.800-1.400-7.800-3c-0.400-1.300-0.200-2.500 0.400-3.900z" fill="#1d1d21" stroke="#101013" stroke-width="0.8" stroke-linejoin="round"/><circle cx="4.3" cy="9.6" r="1.500" fill="#1d1d21" stroke="#101013" stroke-width="0.8"/><circle cx="9.5" cy="7" r="1.500" fill="#1d1d21" stroke="#101013" stroke-width="0.8"/><circle cx="15" cy="6.3" r="1.500" fill="#1d1d21" stroke="#101013" stroke-width="0.8"/><circle cx="20.5" cy="7" r="1.500" fill="#1d1d21" stroke="#101013" stroke-width="0.8"/><circle cx="25.7" cy="9.6" r="1.500" fill="#1d1d21" stroke="#101013" stroke-width="0.8"/><path d="M7.800 21.400c2 1.100 12.400 1.100 14.400 0M7.400 23.300c2 1.200 13.200 1.200 15.200 0M7.400 25.200c2 1.200 13.200 1.200 15.200 0" fill="none" stroke="#d8d8d8" stroke-width="0.800"/></svg>
<svg class="r" style="left:456px;top:133px;filter:drop-shadow(0.800px 0.800px 0.700px rgba(0,0,0,0.450));" width="30" height="30" viewBox="0 0 30 30"><path d="M6 27.800v-2.600l2.300-2v-1.600l2.200-1.400v-8.400l-2.300-1.600v-4.200h3v1.700h2.300v-1.700h3v1.700h2.300v-1.700h3v4.200l-2.300 1.600v8.400l2.200 1.400v1.600l2.300 2v2.600z" fill="#1d1d21" stroke="#101013" stroke-width="0.8" stroke-linejoin="round"/><path d="M8.800 10.400h12.400M10.700 12h8.600M10.700 20.200h8.600M8.600 21.800h12.800M8.400 23.400h13.200M7 25.300h16" fill="none" stroke="#d8d8d8" stroke-width="0.800"/></svg>
<svg class="r" style="left:486px;top:133px;filter:drop-shadow(0.800px 0.800px 0.700px rgba(0,0,0,0.450));" width="30" height="30" viewBox="0 0 30 30"><path d="M15 4.600v5.400M12.900 6.600h4.200" stroke="#101013" stroke-width="1.300" fill="none"/><path d="M15 20.800c-2-4.200-4.200-8.400-8.200-8.400c-2.500 0-4 2-4 4.200c0 2.500 2 4.600 4.600 6.400v3.200c0 1.300 3.500 2.300 7.600 2.300s7.600-1 7.600-2.300v-3.200c2.600-1.800 4.600-3.900 4.600-6.400c0-2.200-1.500-4.200-4-4.200c-4 0-6.200 4.200-8.200 8.400z" fill="#1d1d21" stroke="#101013" stroke-width="0.8" stroke-linejoin="round"/><path d="M15 9.800c-1.600 1.600-2.100 3.600-2.100 5.600l2.100 5l2.100-5c0-2-0.500-4-2.100-5.600z" fill="#1d1d21" stroke="#101013" stroke-width="0.8" stroke-linejoin="round"/><path d="M7.400 23c2.500-1.300 12.700-1.300 15.200 0M7.400 24.800c2.500-1.300 12.700-1.300 15.200 0M7.400 26.500c2.500-1.300 12.700-1.300 15.200 0" fill="none" stroke="#d8d8d8" stroke-width="0.800"/><path d="M13.400 19.500c-1.600-3.400-3.500-5.900-6.400-5.900c-1.800 0-2.900 1.300-2.900 3c0 1.900 1.500 3.500 3.600 5.100M16.600 19.500c1.600-3.400 3.500-5.900 6.400-5.900c1.800 0 2.900 1.300 2.900 3c0 1.900-1.500 3.500-3.600 5.100" fill="none" stroke="#d8d8d8" stroke-width="0.800"/></svg>
<svg class="r" style="left:336px;top:163px;filter:drop-shadow(0.800px 0.800px 0.700px rgba(0,0,0,0.450));" width="30" height="30" viewBox="0 0 30 30"><path d="M15 6.300a3.200 3.200 0 0 1 2.200 5.500c1.800 0.900 2.700 2.500 2.700 4.200c0 1.500-0.700 2.700-1.600 3.500c2.800 1.100 4.800 3.500 4.800 8h-16.200c0-4.500 2-6.900 4.800-8c-0.900-0.800-1.600-2-1.600-3.500c0-1.700 0.900-3.300 2.700-4.200a3.200 3.200 0 0 1 2.200-5.500z" fill="#1d1d21" stroke="#101013" stroke-width="0.8" stroke-linejoin="round"/></svg>
<svg class="r" style="left:426px;top:163px;filter:drop-shadow(0.800px 0.800px 0.700px rgba(0,0,0,0.450));" width="30" height="30" viewBox="0 0 30 30"><path d="M15 6.300a3.200 3.200 0 0 1 2.200 5.500c1.800 0.900 2.700 2.500 2.700 4.200c0 1.500-0.700 2.700-1.600 3.500c2.800 1.100 4.800 3.500 4.800 8h-16.200c0-4.500 2-6.900 4.800-8c-0.900-0.800-1.600-2-1.600-3.500c0-1.700 0.900-3.300 2.700-4.200a3.200 3.200 0 0 1 2.200-5.500z" fill="#1d1d21" stroke="#101013" stroke-width="0.8" stroke-linejoin="round"/></svg>
<svg class="r" style="left:456px;top:163px;filter:drop-shadow(0.800px 0.800px 0.700px rgba(0,0,0,0.450));" width="30" height="30" viewBox="0 0 30 30"><path d="M15 6.300a3.200 3.200 0 0 1 2.200 5.500c1.800 0.900 2.700 2.500 2.700 4.200c0 1.500-0.700 2.700-1.600 3.500c2.800 1.100 4.800 3.500 4.800 8h-16.200c0-4.500 2-6.900 4.800-8c-0.900-0.800-1.600-2-1.600-3.500c0-1.700 0.900-3.300 2.700-4.200a3.200 3.200 0 0 1 2.200-5.500z" fill="#1d1d21" stroke="#101013" stroke-width="0.8" stroke-linejoin="round"/></svg>
<svg class="r" style="left:516px;top:163px;filter:drop-shadow(0.800px 0.800px 0.700px rgba(0,0,0,0.450));" width="30" height="30" viewBox="0 0 30 30"><path d="M15 6.300a3.200 3.200 0 0 1 2.200 5.500c1.800 0.900 2.700 2.500 2.700 4.200c0 1.500-0.700 2.700-1.600 3.500c2.800 1.100 4.800 3.500 4.800 8h-16.200c0-4.500 2-6.900 4.800-8c-0.900-0.800-1.600-2-1.600-3.500c0-1.700 0.900-3.300 2.700-4.200a3.200 3.200 0 0 1 2.200-5.500z" fill="#1d1d21" stroke="#101013" stroke-width="0.8" stroke-linejoin="round"/></svg>
<svg class="r" style="left:366px;top:193px;filter:drop-shadow(0.800px 0.800px 0.700px rgba(0,0,0,0.450));" width="30" height="30" viewBox="0 0 30 30"><path d="M15 6.300a3.200 3.200 0 0 1 2.200 5.500c1.800 0.900 2.700 2.500 2.700 4.200c0 1.500-0.700 2.700-1.600 3.500c2.800 1.100 4.800 3.500 4.800 8h-16.200c0-4.500 2-6.900 4.800-8c-0.900-0.800-1.600-2-1.600-3.500c0-1.700 0.900-3.300 2.700-4.200a3.200 3.200 0 0 1 2.200-5.500z" fill="#1d1d21" stroke="#101013" stroke-width="0.8" stroke-linejoin="round"/></svg>
<svg class="r" style="left:396px;top:193px;filter:drop-shadow(0.800px 0.800px 0.700px rgba(0,0,0,0.450));" width="30" height="30" viewBox="0 0 30 30"><path d="M15 6.300a3.200 3.200 0 0 1 2.200 5.500c1.800 0.900 2.700 2.500 2.700 4.200c0 1.500-0.700 2.700-1.600 3.500c2.800 1.100 4.800 3.500 4.800 8h-16.200c0-4.500 2-6.900 4.800-8c-0.900-0.800-1.600-2-1.600-3.500c0-1.700 0.900-3.300 2.700-4.200a3.200 3.200 0 0 1 2.200-5.500z" fill="#1d1d21" stroke="#101013" stroke-width="0.8" stroke-linejoin="round"/></svg>
<svg class="r" style="left:486px;top:193px;filter:drop-shadow(0.800px 0.800px 0.700px rgba(0,0,0,0.450));" width="30" height="30" viewBox="0 0 30 30"><path d="M15 6.300a3.200 3.200 0 0 1 2.200 5.500c1.800 0.900 2.700 2.500 2.700 4.200c0 1.500-0.700 2.700-1.600 3.500c2.800 1.100 4.800 3.500 4.800 8h-16.200c0-4.500 2-6.900 4.800-8c-0.900-0.800-1.600-2-1.600-3.500c0-1.700 0.900-3.300 2.700-4.200a3.200 3.200 0 0 1 2.200-5.500z" fill="#1d1d21" stroke="#101013" stroke-width="0.8" stroke-linejoin="round"/></svg>
<svg class="r" style="left:516px;top:193px;filter:drop-shadow(0.800px 0.800px 0.700px rgba(0,0,0,0.450));" width="30" height="30" viewBox="0 0 30 30"><path d="M15 24.300c-2 2.200-5 1.700-7.500 1.700c-1.600 0-3.100 0.500-3.900 1.600l1.300 1.400c1-0.900 2.500-0.900 4-0.900c2.600 0 4.900-0.300 6.100-1.900c1.200 1.600 3.500 1.900 6.100 1.900c1.500 0 3 0 4 0.900l1.300-1.400c-0.800-1.100-2.300-1.600-3.900-1.600c-2.500 0-5.500 0.500-7.500-1.700z" fill="#1d1d21" stroke="#101013" stroke-width="0.8" stroke-linejoin="round"/><path d="M11.200 20.300h7.600v3.600h-7.600z" fill="#1d1d21" stroke="#101013" stroke-width="0.8" stroke-linejoin="round"/><path d="M15 8.600c-4.200 2.200-6.200 5.400-6.200 7.800c0 2 1.300 3.300 2.800 4h6.800c1.500-0.700 2.800-2 2.800-4c0-2.400-2-5.600-6.200-7.800z" fill="#1d1d21" stroke="#101013" stroke-width="0.8" stroke-linejoin="round"/><circle cx="15" cy="7" r="1.800" fill="#1d1d21" stroke="#101013" stroke-width="0.8"/><path d="M15 12v4.600M12.700 14.300h4.600" stroke="#d8d8d8" stroke-width="1"/><path d="M11.500 22.100h7" stroke="#d8d8d8" stroke-width="0.700"/></svg>
<svg class="r" style="left:306px;top:223px;filter:drop-shadow(0.800px 0.800px 0.700px rgba(0,0,0,0.450));" width="30" height="30" viewBox="0 0 30 30"><path d="M15 6.300a3.200 3.200 0 0 1 2.200 5.500c1.800 0.900 2.700 2.500 2.700 4.200c0 1.500-0.700 2.700-1.600 3.500c2.800 1.100 4.800 3.500 4.800 8h-16.200c0-4.500 2-6.900 4.800-8c-0.900-0.800-1.600-2-1.600-3.500c0-1.700 0.900-3.300 2.700-4.200a3.200 3.200 0 0 1 2.200-5.500z" fill="#1d1d21" stroke="#101013" stroke-width="0.8" stroke-linejoin="round"/></svg>
<svg class="r" style="left:516px;top:223px;filter:drop-shadow(0.800px 0.800px 0.700px rgba(0,0,0,0.450));" width="30" height="30" viewBox="0 0 30 30"><path d="M11 28.200c0.300-3.500 3.500-5.500 4.800-8.400c-1.800 1.600-3.800 1.400-5.300 2.100c-1.200 0.800-2.400 1.600-3.600 0.900c-1.500-0.800-2.800-2.400-2.600-3.800c0.500-2.700 3-5 4.200-8.200c-0.400-1.800-0.300-3.600 0.300-5.200c1.200 0.700 2.100 1.800 2.700 3.100c0.400-1.200 1.100-2.300 2-3.100c0.900 0.900 1.400 2.100 1.600 3.300c6.500 1.500 11.300 8 11.600 19.300z" fill="#1d1d21" stroke="#101013" stroke-width="0.8" stroke-linejoin="round"/><circle cx="9.800" cy="13.600" r="0.900" fill="#d8d8d8"/><path d="M6 19.500l-0.500 0.900" stroke="#d8d8d8" stroke-width="0.800"/><path d="M17.500 9.500c5 2 8 8 8 18" fill="none" stroke="#cfcfcf" stroke-width="0.800"/></svg>
<svg class="r" style="left:306px;top:253px;filter:drop-shadow(0.800px 0.800px 0.700px rgba(0,0,0,0.450));" width="30" height="30" viewBox="0 0 30 30"><path d="M15 6.300a3.200 3.200 0 0 1 2.200 5.500c1.800 0.900 2.700 2.500 2.700 4.200c0 1.500-0.700 2.700-1.600 3.500c2.800 1.100 4.800 3.500 4.800 8h-16.200c0-4.500 2-6.900 4.800-8c-0.900-0.800-1.600-2-1.600-3.500c0-1.700 0.900-3.300 2.700-4.200a3.200 3.200 0 0 1 2.200-5.500z" fill="#efeee0" stroke="#333333" stroke-width="1.1" stroke-linejoin="round"/></svg>
<svg class="r" style="left:336px;top:253px;filter:drop-shadow(0.800px 0.800px 0.700px rgba(0,0,0,0.450));" width="30" height="30" viewBox="0 0 30 30"><path d="M11 28.200c0.300-3.500 3.500-5.500 4.800-8.400c-1.800 1.600-3.800 1.400-5.300 2.100c-1.200 0.800-2.400 1.600-3.600 0.900c-1.500-0.800-2.800-2.400-2.600-3.800c0.500-2.700 3-5 4.200-8.200c-0.400-1.800-0.300-3.600 0.300-5.200c1.200 0.700 2.100 1.800 2.700 3.100c0.400-1.200 1.100-2.300 2-3.100c0.900 0.900 1.400 2.100 1.600 3.300c6.500 1.500 11.300 8 11.600 19.300z" fill="#1d1d21" stroke="#101013" stroke-width="0.8" stroke-linejoin="round"/><circle cx="9.800" cy="13.600" r="0.900" fill="#d8d8d8"/><path d="M6 19.500l-0.500 0.900" stroke="#d8d8d8" stroke-width="0.800"/><path d="M17.500 9.500c5 2 8 8 8 18" fill="none" stroke="#cfcfcf" stroke-width="0.800"/></svg>
<svg class="r" style="left:396px;top:253px;filter:drop-shadow(0.800px 0.800px 0.700px rgba(0,0,0,0.450));" width="30" height="30" viewBox="0 0 30 30"><path d="M15 6.300a3.200 3.200 0 0 1 2.200 5.500c1.800 0.900 2.700 2.500 2.700 4.200c0 1.500-0.700 2.700-1.600 3.500c2.800 1.100 4.800 3.500 4.800 8h-16.200c0-4.500 2-6.900 4.800-8c-0.900-0.800-1.600-2-1.600-3.500c0-1.700 0.900-3.300 2.700-4.200a3.200 3.200 0 0 1 2.200-5.500z" fill="#efeee0" stroke="#333333" stroke-width="1.1" stroke-linejoin="round"/></svg>
<svg class="r" style="left:426px;top:253px;filter:drop-shadow(0.800px 0.800px 0.700px rgba(0,0,0,0.450));" width="30" height="30" viewBox="0 0 30 30"><path d="M15 6.300a3.200 3.200 0 0 1 2.200 5.500c1.800 0.900 2.700 2.500 2.700 4.200c0 1.500-0.700 2.700-1.600 3.500c2.800 1.100 4.800 3.500 4.800 8h-16.200c0-4.500 2-6.900 4.800-8c-0.900-0.800-1.600-2-1.600-3.500c0-1.700 0.900-3.300 2.700-4.200a3.200 3.200 0 0 1 2.200-5.500z" fill="#efeee0" stroke="#333333" stroke-width="1.1" stroke-linejoin="round"/></svg>
<svg class="r" style="left:366px;top:283px;filter:drop-shadow(0.800px 0.800px 0.700px rgba(0,0,0,0.450));" width="30" height="30" viewBox="0 0 30 30"><path d="M11 28.200c0.300-3.500 3.500-5.500 4.800-8.400c-1.800 1.600-3.800 1.400-5.300 2.100c-1.200 0.800-2.400 1.600-3.600 0.900c-1.500-0.800-2.800-2.400-2.600-3.800c0.500-2.700 3-5 4.200-8.200c-0.400-1.800-0.300-3.600 0.300-5.200c1.200 0.700 2.100 1.800 2.700 3.100c0.400-1.200 1.100-2.300 2-3.100c0.900 0.900 1.400 2.100 1.600 3.300c6.500 1.500 11.300 8 11.600 19.300z" fill="#efeee0" stroke="#333333" stroke-width="1.1" stroke-linejoin="round"/><circle cx="9.800" cy="13.600" r="0.900" fill="#4a4a44"/><path d="M6 19.500l-0.500 0.900" stroke="#4a4a44" stroke-width="0.800"/><path d="M15.800 19.800c1.200-1.400 1.800-3 1.600-4.800" fill="none" stroke="#4a4a44" stroke-width="0.800"/></svg>
<svg class="r" style="left:456px;top:283px;filter:drop-shadow(0.800px 0.800px 0.700px rgba(0,0,0,0.450));" width="30" height="30" viewBox="0 0 30 30"><path d="M11 28.200c0.300-3.500 3.500-5.500 4.800-8.400c-1.800 1.600-3.800 1.400-5.300 2.100c-1.200 0.800-2.400 1.600-3.600 0.900c-1.500-0.800-2.800-2.400-2.600-3.800c0.500-2.700 3-5 4.200-8.200c-0.400-1.800-0.300-3.600 0.300-5.200c1.200 0.700 2.100 1.800 2.700 3.100c0.400-1.200 1.100-2.300 2-3.100c0.900 0.900 1.400 2.100 1.600 3.300c6.500 1.500 11.300 8 11.600 19.300z" fill="#efeee0" stroke="#333333" stroke-width="1.1" stroke-linejoin="round"/><circle cx="9.800" cy="13.600" r="0.900" fill="#4a4a44"/><path d="M6 19.500l-0.500 0.900" stroke="#4a4a44" stroke-width="0.800"/><path d="M15.800 19.800c1.200-1.400 1.800-3 1.600-4.800" fill="none" stroke="#4a4a44" stroke-width="0.800"/></svg>
<svg class="r" style="left:516px;top:283px;filter:drop-shadow(0.800px 0.800px 0.700px rgba(0,0,0,0.450));" width="30" height="30" viewBox="0 0 30 30"><path d="M15 6.300a3.200 3.200 0 0 1 2.200 5.500c1.800 0.900 2.700 2.500 2.700 4.200c0 1.500-0.700 2.700-1.600 3.500c2.800 1.100 4.800 3.500 4.800 8h-16.200c0-4.500 2-6.900 4.800-8c-0.900-0.800-1.600-2-1.600-3.500c0-1.700 0.900-3.300 2.700-4.200a3.200 3.200 0 0 1 2.200-5.500z" fill="#efeee0" stroke="#333333" stroke-width="1.1" stroke-linejoin="round"/></svg>
<svg class="r" style="left:336px;top:313px;filter:drop-shadow(0.800px 0.800px 0.700px rgba(0,0,0,0.450));" width="30" height="30" viewBox="0 0 30 30"><path d="M15 6.300a3.200 3.200 0 0 1 2.200 5.500c1.800 0.900 2.700 2.500 2.700 4.200c0 1.500-0.700 2.700-1.600 3.500c2.800 1.100 4.800 3.500 4.800 8h-16.200c0-4.500 2-6.900 4.800-8c-0.900-0.800-1.600-2-1.600-3.500c0-1.700 0.900-3.300 2.700-4.200a3.200 3.200 0 0 1 2.200-5.500z" fill="#efeee0" stroke="#333333" stroke-width="1.1" stroke-linejoin="round"/></svg>
<svg class="r" style="left:366px;top:313px;filter:drop-shadow(0.800px 0.800px 0.700px rgba(0,0,0,0.450));" width="30" height="30" viewBox="0 0 30 30"><path d="M15 6.300a3.200 3.200 0 0 1 2.200 5.500c1.800 0.900 2.700 2.500 2.700 4.200c0 1.500-0.700 2.700-1.600 3.500c2.800 1.100 4.800 3.500 4.800 8h-16.200c0-4.500 2-6.900 4.800-8c-0.900-0.800-1.600-2-1.600-3.500c0-1.700 0.900-3.300 2.700-4.200a3.200 3.200 0 0 1 2.200-5.500z" fill="#efeee0" stroke="#333333" stroke-width="1.1" stroke-linejoin="round"/></svg>
<svg class="r" style="left:426px;top:313px;filter:drop-shadow(0.800px 0.800px 0.700px rgba(0,0,0,0.450));" width="30" height="30" viewBox="0 0 30 30"><path d="M15 24.300c-2 2.200-5 1.700-7.500 1.700c-1.600 0-3.100 0.500-3.900 1.600l1.300 1.400c1-0.900 2.500-0.900 4-0.900c2.600 0 4.900-0.300 6.100-1.900c1.200 1.600 3.500 1.900 6.100 1.900c1.500 0 3 0 4 0.900l1.300-1.400c-0.800-1.100-2.300-1.600-3.900-1.600c-2.500 0-5.500 0.500-7.500-1.700z" fill="#efeee0" stroke="#333333" stroke-width="1.1" stroke-linejoin="round"/><path d="M11.200 20.300h7.600v3.600h-7.600z" fill="#efeee0" stroke="#333333" stroke-width="1.1" stroke-linejoin="round"/><path d="M15 8.600c-4.200 2.200-6.200 5.400-6.200 7.800c0 2 1.300 3.300 2.800 4h6.800c1.500-0.700 2.800-2 2.800-4c0-2.400-2-5.600-6.200-7.800z" fill="#efeee0" stroke="#333333" stroke-width="1.1" stroke-linejoin="round"/><circle cx="15" cy="7" r="1.800" fill="#efeee0" stroke="#333333" stroke-width="1.1"/><path d="M15 12v4.600M12.700 14.300h4.600" stroke="#4a4a44" stroke-width="1"/><path d="M11.500 22.100h7" stroke="#4a4a44" stroke-width="0.700"/></svg>
<svg class="r" style="left:456px;top:313px;filter:drop-shadow(0.800px 0.800px 0.700px rgba(0,0,0,0.450));" width="30" height="30" viewBox="0 0 30 30"><path d="M15 6.300a3.200 3.200 0 0 1 2.200 5.500c1.800 0.900 2.700 2.500 2.700 4.200c0 1.500-0.700 2.700-1.600 3.500c2.800 1.100 4.800 3.500 4.800 8h-16.200c0-4.500 2-6.900 4.800-8c-0.900-0.800-1.600-2-1.600-3.500c0-1.700 0.900-3.300 2.700-4.200a3.200 3.200 0 0 1 2.200-5.500z" fill="#efeee0" stroke="#333333" stroke-width="1.1" stroke-linejoin="round"/></svg>
<svg class="r" style="left:486px;top:313px;filter:drop-shadow(0.800px 0.800px 0.700px rgba(0,0,0,0.450));" width="30" height="30" viewBox="0 0 30 30"><path d="M15 6.300a3.200 3.200 0 0 1 2.200 5.500c1.800 0.900 2.700 2.500 2.700 4.200c0 1.500-0.700 2.700-1.600 3.500c2.800 1.100 4.800 3.500 4.800 8h-16.200c0-4.500 2-6.900 4.800-8c-0.900-0.800-1.600-2-1.600-3.500c0-1.700 0.900-3.300 2.700-4.200a3.200 3.200 0 0 1 2.200-5.500z" fill="#efeee0" stroke="#333333" stroke-width="1.1" stroke-linejoin="round"/></svg>
<svg class="r" style="left:516px;top:313px;filter:drop-shadow(0.800px 0.800px 0.700px rgba(0,0,0,0.450));" width="30" height="30" viewBox="0 0 30 30"><path d="M15 24.300c-2 2.200-5 1.700-7.500 1.700c-1.600 0-3.100 0.500-3.900 1.600l1.300 1.400c1-0.900 2.500-0.900 4-0.900c2.600 0 4.900-0.300 6.100-1.900c1.200 1.600 3.500 1.900 6.100 1.900c1.500 0 3 0 4 0.900l1.300-1.400c-0.800-1.100-2.300-1.600-3.900-1.600c-2.500 0-5.500 0.500-7.500-1.700z" fill="#efeee0" stroke="#333333" stroke-width="1.1" stroke-linejoin="round"/><path d="M11.200 20.300h7.600v3.600h-7.600z" fill="#efeee0" stroke="#333333" stroke-width="1.1" stroke-linejoin="round"/><path d="M15 8.600c-4.200 2.200-6.200 5.400-6.200 7.800c0 2 1.300 3.300 2.800 4h6.800c1.500-0.700 2.800-2 2.800-4c0-2.400-2-5.600-6.200-7.800z" fill="#efeee0" stroke="#333333" stroke-width="1.1" stroke-linejoin="round"/><circle cx="15" cy="7" r="1.800" fill="#efeee0" stroke="#333333" stroke-width="1.1"/><path d="M15 12v4.600M12.700 14.300h4.600" stroke="#4a4a44" stroke-width="1"/><path d="M11.500 22.100h7" stroke="#4a4a44" stroke-width="0.700"/></svg>
<svg class="r" style="left:306px;top:343px;filter:drop-shadow(0.800px 0.800px 0.700px rgba(0,0,0,0.450));" width="30" height="30" viewBox="0 0 30 30"><path d="M6 27.800v-2.600l2.300-2v-1.600l2.200-1.400v-8.400l-2.300-1.600v-4.200h3v1.700h2.300v-1.700h3v1.700h2.300v-1.700h3v4.200l-2.300 1.600v8.400l2.200 1.400v1.600l2.300 2v2.600z" fill="#efeee0" stroke="#333333" stroke-width="1.1" stroke-linejoin="round"/><path d="M8.800 10.400h12.400M10.700 12h8.600M10.700 20.200h8.600M8.600 21.800h12.800M8.400 23.400h13.200M7 25.300h16" fill="none" stroke="#4a4a44" stroke-width="0.800"/></svg>
<svg class="r" style="left:396px;top:343px;filter:drop-shadow(0.800px 0.800px 0.700px rgba(0,0,0,0.450));" width="30" height="30" viewBox="0 0 30 30"><path d="M7.600 21L4.400 10.600L10.300 17.600L9.600 8L13.400 17L15 7.300L16.600 17L20.400 8L19.700 17.600L25.600 10.600L22.400 21c0.600 1.400 0.800 2.600 0.400 3.900c0 1.600-3.500 3-7.800 3s-7.800-1.400-7.800-3c-0.400-1.300-0.200-2.500 0.400-3.900z" fill="#efeee0" stroke="#333333" stroke-width="1.1" stroke-linejoin="round"/><circle cx="4.3" cy="9.6" r="1.500" fill="#efeee0" stroke="#333333" stroke-width="1.1"/><circle cx="9.5" cy="7" r="1.500" fill="#efeee0" stroke="#333333" stroke-width="1.1"/><circle cx="15" cy="6.3" r="1.500" fill="#efeee0" stroke="#333333" stroke-width="1.1"/><circle cx="20.5" cy="7" r="1.500" fill="#efeee0" stroke="#333333" stroke-width="1.1"/><circle cx="25.7" cy="9.6" r="1.500" fill="#efeee0" stroke="#333333" stroke-width="1.1"/><path d="M7.800 21.400c2 1.100 12.400 1.100 14.400 0M7.400 23.300c2 1.200 13.200 1.200 15.200 0M7.400 25.200c2 1.200 13.200 1.200 15.200 0" fill="none" stroke="#4a4a44" stroke-width="0.800"/></svg>
<svg class="r" style="left:426px;top:343px;filter:drop-shadow(0.800px 0.800px 0.700px rgba(0,0,0,0.450));" width="30" height="30" viewBox="0 0 30 30"><path d="M6 27.800v-2.600l2.300-2v-1.600l2.200-1.400v-8.400l-2.300-1.600v-4.200h3v1.700h2.300v-1.700h3v1.700h2.300v-1.700h3v4.200l-2.300 1.600v8.400l2.200 1.400v1.600l2.300 2v2.600z" fill="#efeee0" stroke="#333333" stroke-width="1.1" stroke-linejoin="round"/><path d="M8.800 10.400h12.400M10.700 12h8.600M10.700 20.200h8.600M8.600 21.800h12.800M8.400 23.400h13.200M7 25.300h16" fill="none" stroke="#4a4a44" stroke-width="0.800"/></svg>
<svg class="r" style="left:486px;top:343px;filter:drop-shadow(0.800px 0.800px 0.700px rgba(0,0,0,0.450));" width="30" height="30" viewBox="0 0 30 30"><path d="M15 4.600v5.400M12.900 6.600h4.200" stroke="#333333" stroke-width="1.300" fill="none"/><path d="M15 20.800c-2-4.200-4.200-8.400-8.200-8.400c-2.500 0-4 2-4 4.200c0 2.500 2 4.600 4.600 6.400v3.200c0 1.300 3.500 2.300 7.600 2.300s7.600-1 7.600-2.300v-3.200c2.600-1.800 4.600-3.900 4.600-6.400c0-2.200-1.500-4.200-4-4.200c-4 0-6.200 4.200-8.200 8.400z" fill="#efeee0" stroke="#333333" stroke-width="1.1" stroke-linejoin="round"/><path d="M15 9.800c-1.600 1.600-2.100 3.600-2.100 5.600l2.100 5l2.100-5c0-2-0.500-4-2.100-5.600z" fill="#efeee0" stroke="#333333" stroke-width="1.1" stroke-linejoin="round"/><path d="M7.400 23c2.500-1.300 12.700-1.300 15.200 0M7.400 24.800c2.500-1.300 12.700-1.300 15.200 0M7.400 26.500c2.500-1.300 12.700-1.300 15.200 0" fill="none" stroke="#4a4a44" stroke-width="0.800"/></svg>
<svg class="r" style="left:495px;top:172px;" width="42" height="40" viewBox="0 0 42 40"><path d="M6.500 7.500L29 29" stroke="#f2ea3c" stroke-width="3.200" stroke-linecap="round"/><path d="M33.800 33.800l-8.300-2.300l6-6z" fill="#f2ea3c"/></svg>
<div class="r" style="left:545px;top:372px;width:3px;height:3px;background:#fff;"></div>
<div class="r" style="left:2px;top:402px;width:850px;height:233px;background:#fff;"></div>
<div class="r" style="left:2px;top:401px;width:850px;height:1px;background:#8d96a5;"></div>
<div class="r" style="left:2px;top:402px;width:850px;height:16px;background:linear-gradient(#cdd5df,#b5c0ce);"></div>
<span id="t53" class="t" style="left:5px;top:402.59px;font-size:10px;color:#1b1b1b;transform-origin:0 50%;transform:scaleX(0.9868);">Onlinedatenbank</span>
<svg class="r" style="left:825px;top:407px;" width="9" height="6" viewBox="0 0 9 6"><path d="M0.500 0.500h8l-4 4.500z" fill="#111"/></svg>
<svg class="r" style="left:839px;top:406px;" width="8" height="8" viewBox="0 0 8 8"><path d="M0.800 0.800l6.400 6.400M7.200 0.800l-6.400 6.400" stroke="#111" stroke-width="1.400"/></svg>
<div class="r" style="left:3px;top:420.5px;width:84px;height:17.5px;background:#fdfdfd;border:1px solid #d0d3da;box-sizing:border-box;"></div>
<span id="t54" class="t" style="left:6.5px;top:421.59px;font-size:10px;color:#1e1e1e;transform-origin:0 50%;transform:scaleX(0.9935);">Zur Originalpartie</span>
<div class="r" style="left:360px;top:421px;width:133px;height:15.5px;background:#fff;border-bottom:1px solid #c9c9c9;border-right:1px solid #c9c9c9;box-sizing:border-box;"></div>
<span id="t55" class="t" style="left:391px;top:421.07px;font-size:11.5px;color:#222;font-style:italic;font-family:'Liberation Serif',serif;transform-origin:0 50%;transform:scaleX(1.0286);">4 Games found</span>
<div class="r" style="left:2px;top:441px;width:255px;height:20px;background:linear-gradient(#ffffff,#f3f3f6);border-top:1px solid #e2e3ea;border-bottom:1px solid #dcdde6;box-sizing:border-box;"></div>
<span id="t56" class="t" style="left:5px;top:443.59px;font-size:10px;color:#222;transform-origin:0 50%;transform:scaleX(0.9130);">Züge</span>
<div class="r" style="left:59px;top:441px;width:1px;height:20px;background:#dfe0e8;"></div>
<span id="t57" class="t" style="left:63.5px;top:443.59px;font-size:10px;color:#222;transform-origin:0 50%;transform:scaleX(0.9375);">Partien</span>
<div class="r" style="left:106px;top:441px;width:1px;height:20px;background:#dfe0e8;"></div>
<span id="t58" class="t" style="left:110px;top:443.59px;font-size:10px;color:#222;transform-origin:0 50%;transform:scaleX(0.9487);">Zugum...</span>
<div class="r" style="left:153px;top:441px;width:1px;height:20px;background:#dfe0e8;"></div>
<span id="t59" class="t" style="left:157px;top:443.59px;font-size:10px;color:#222;transform-origin:0 50%;transform:scaleX(0.9355);">Punkte</span>
<div class="r" style="left:199px;top:441px;width:1px;height:20px;background:#dfe0e8;"></div>
<span id="t60" class="t" style="left:203px;top:443.59px;font-size:10px;color:#222;transform-origin:0 50%;transform:scaleX(0.8974);">Remisen</span>
<div class="r" style="left:245px;top:441px;width:1px;height:20px;background:#dfe0e8;"></div>
<div class="r" style="left:249px;top:441px;width:8px;height:20px;overflow:hidden">
<span id="t61" class="t" style="left:0px;top:2.58px;font-size:10px;color:#222;transform-origin:0 50%;transform:scaleX(0.9500);">Ge</span>
</div>
<div class="r" style="left:2px;top:461px;width:255px;height:1.3px;background:#3f8cd8;"></div>
<div class="r" style="left:2px;top:474.2px;width:255px;height:1.3px;background:#3f8cd8;"></div>
<div class="r" style="left:153px;top:462.5px;width:45px;height:11.5px;background:linear-gradient(90deg,#dcecdc 0%,#dcecdc 17%,#f6e4e4 33%,#f6e4e4 100%);"></div>
<span id="t62" class="t" style="left:8.5px;top:460.59px;font-size:10px;color:#111;transform-origin:0 50%;transform:scaleX(0.8793);">12.Bf1</span>
<span id="t63" class="t" style="left:63.5px;top:460.59px;font-size:10px;color:#111;transform-origin:0 50%;transform:scaleX(0.9500);">2</span>
<span id="t64" class="t" style="left:110px;top:460.59px;font-size:10px;color:#111;transform-origin:0 50%;transform:scaleX(0.9500);">0</span>
<span id="t65" class="t" style="left:157px;top:460.59px;font-size:10px;color:#111;transform-origin:0 50%;transform:scaleX(0.8929);">25.0%</span>
<span id="t66" class="t" style="left:203px;top:460.59px;font-size:10px;color:#111;transform-origin:0 50%;transform:scaleX(0.8929);">50.0%</span>
<div class="r" style="left:249px;top:461.2px;width:8px;height:14px;overflow:hidden">
<span id="t67" class="t" style="left:0px;top:-0.41px;font-size:10px;color:#111;transform-origin:0 50%;transform:scaleX(0.9500);">19</span>
</div>
<div class="r" style="left:153px;top:475.5px;width:45px;height:14px;background:#dcecdc;"></div>
<span id="t68" class="t" style="left:8.5px;top:474.59px;font-size:10px;color:#111;transform-origin:0 50%;transform:scaleX(0.9032);">12.Bc4</span>
<span id="t69" class="t" style="left:63.5px;top:474.59px;font-size:10px;color:#111;transform-origin:0 50%;transform:scaleX(0.9500);">1</span>
<span id="t70" class="t" style="left:110px;top:474.59px;font-size:10px;color:#111;transform-origin:0 50%;transform:scaleX(0.9500);">0</span>
<span id="t71" class="t" style="left:157px;top:474.59px;font-size:10px;color:#111;transform-origin:0 50%;transform:scaleX(0.9118);">100.0%</span>
<span id="t72" class="t" style="left:203px;top:474.59px;font-size:10px;color:#111;transform-origin:0 50%;transform:scaleX(0.8696);">0.0%</span>
<div class="r" style="left:249px;top:475.2px;width:8px;height:14px;overflow:hidden">
<span id="t73" class="t" style="left:0px;top:-0.41px;font-size:10px;color:#111;transform-origin:0 50%;transform:scaleX(0.9500);">20</span>
</div>
<div class="r" style="left:153px;top:489.5px;width:45px;height:14px;background:linear-gradient(90deg,#dcecdc 0%,#dcecdc 42%,#f6e4e4 58%,#f6e4e4 100%);"></div>
<span id="t74" class="t" style="left:8.5px;top:488.59px;font-size:10px;color:#111;transform-origin:0 50%;transform:scaleX(0.9062);">12.Na2</span>
<span id="t75" class="t" style="left:63.5px;top:488.59px;font-size:10px;color:#111;transform-origin:0 50%;transform:scaleX(0.9500);">1</span>
<span id="t76" class="t" style="left:110px;top:488.59px;font-size:10px;color:#111;transform-origin:0 50%;transform:scaleX(0.9500);">0</span>
<span id="t77" class="t" style="left:157px;top:488.59px;font-size:10px;color:#111;transform-origin:0 50%;transform:scaleX(0.8929);">50.0%</span>
<span id="t78" class="t" style="left:203px;top:488.59px;font-size:10px;color:#111;transform-origin:0 50%;transform:scaleX(0.9118);">100.0%</span>
<div class="r" style="left:249px;top:489.2px;width:8px;height:14px;overflow:hidden">
<span id="t79" class="t" style="left:0px;top:-0.41px;font-size:10px;color:#111;transform-origin:0 50%;transform:scaleX(0.9500);">20</span>
</div>
<div class="r" style="left:258px;top:440px;width:3px;height:195px;background:#f1f1f4;"></div>
<div class="r" style="left:261px;top:440px;width:1px;height:195px;background:#7f7f86;"></div>
<div class="r" style="left:259px;top:520px;width:1px;height:1px;background:#c8c8cf;"></div>
<div class="r" style="left:259px;top:522px;width:1px;height:1px;background:#c8c8cf;"></div>
<div class="r" style="left:259px;top:524px;width:1px;height:1px;background:#c8c8cf;"></div>
<div class="r" style="left:259px;top:526px;width:1px;height:1px;background:#c8c8cf;"></div>
<div class="r" style="left:259px;top:528px;width:1px;height:1px;background:#c8c8cf;"></div>
<div class="r" style="left:259px;top:530px;width:1px;height:1px;background:#c8c8cf;"></div>
<div class="r" style="left:259px;top:532px;width:1px;height:1px;background:#c8c8cf;"></div>
<div class="r" style="left:259px;top:534px;width:1px;height:1px;background:#c8c8cf;"></div>
<div class="r" style="left:259px;top:536px;width:1px;height:1px;background:#c8c8cf;"></div>
<div class="r" style="left:259px;top:538px;width:1px;height:1px;background:#c8c8cf;"></div>
<div class="r" style="left:259px;top:540px;width:1px;height:1px;background:#c8c8cf;"></div>
<div class="r" style="left:259px;top:542px;width:1px;height:1px;background:#c8c8cf;"></div>
<div class="r" style="left:259px;top:544px;width:1px;height:1px;background:#c8c8cf;"></div>
<div class="r" style="left:259px;top:546px;width:1px;height:1px;background:#c8c8cf;"></div>
<div class="r" style="left:259px;top:548px;width:1px;height:1px;background:#c8c8cf;"></div>
<div class="r" style="left:259px;top:550px;width:1px;height:1px;background:#c8c8cf;"></div>
<div class="r" style="left:259px;top:552px;width:1px;height:1px;background:#c8c8cf;"></div>
<div class="r" style="left:259px;top:554px;width:1px;height:1px;background:#c8c8cf;"></div>
<div class="r" style="left:259px;top:556px;width:1px;height:1px;background:#c8c8cf;"></div>
<div class="r" style="left:259px;top:558px;width:1px;height:1px;background:#c8c8cf;"></div>
<div class="r" style="left:259px;top:560px;width:1px;height:1px;background:#c8c8cf;"></div>
<div class="r" style="left:259px;top:562px;width:1px;height:1px;background:#c8c8cf;"></div>
<div class="r" style="left:259px;top:564px;width:1px;height:1px;background:#c8c8cf;"></div>
<div class="r" style="left:259px;top:566px;width:1px;height:1px;background:#c8c8cf;"></div>
<div class="r" style="left:259px;top:568px;width:1px;height:1px;background:#c8c8cf;"></div>
<div class="r" style="left:259px;top:570px;width:1px;height:1px;background:#c8c8cf;"></div>
<div class="r" style="left:262px;top:440px;width:413px;height:20px;background:linear-gradient(#ffffff,#f3f3f6);border-top:1px solid #e2e3ea;border-bottom:1px solid #dcdde6;box-sizing:border-box;"></div>
<span id="t80" class="t" style="left:265px;top:442.59px;font-size:10px;color:#222;transform-origin:0 50%;transform:scaleX(1.0000);">White</span>
<div class="r" style="left:343px;top:440px;width:1px;height:20px;background:#dfe0e8;"></div>
<span id="t81" class="t" style="left:347px;top:442.59px;font-size:10px;color:#222;transform-origin:0 50%;transform:scaleX(0.9259);">Elo W</span>
<div class="r" style="left:378px;top:440px;width:1px;height:20px;background:#dfe0e8;"></div>
<div class="r" style="left:378px;top:440px;width:82px;height:20px;background:#c7daf1;"></div>
<span id="t82" class="t" style="left:382px;top:442.59px;font-size:10px;color:#222;transform-origin:0 50%;transform:scaleX(0.8750);">Black</span>
<div class="r" style="left:460px;top:440px;width:1px;height:20px;background:#dfe0e8;"></div>
<span id="t83" class="t" style="left:463.5px;top:442.59px;font-size:10px;color:#222;transform-origin:0 50%;transform:scaleX(0.9167);">Elo B</span>
<div class="r" style="left:494.5px;top:440px;width:1px;height:20px;background:#dfe0e8;"></div>
<span id="t84" class="t" style="left:498.5px;top:442.59px;font-size:10px;color:#222;transform-origin:0 50%;transform:scaleX(0.9643);">Result</span>
<div class="r" style="left:542px;top:440px;width:1px;height:20px;background:#dfe0e8;"></div>
<span id="t85" class="t" style="left:546px;top:442.59px;font-size:10px;color:#222;transform-origin:0 50%;transform:scaleX(0.8750);">Year</span>
<div class="r" style="left:607px;top:440px;width:1px;height:20px;background:#dfe0e8;"></div>
<span id="t86" class="t" style="left:610.5px;top:442.59px;font-size:10px;color:#222;transform-origin:0 50%;transform:scaleX(1.0270);">Notation</span>
<div class="r" style="left:262px;top:461px;width:412.500px;height:60px;overflow:hidden">
<span id="t87" class="t" style="left:6.5px;top:-1.41px;font-size:10px;color:#111;transform-origin:0 50%;transform:scaleX(1.0086);">Siikaluoma,A</span>
<span id="t88" class="t" style="left:81.5px;top:-1.41px;font-size:10px;color:#111;transform-origin:0 50%;transform:scaleX(0.9318);">2496</span>
<span id="t89" class="t" style="left:120px;top:-1.41px;font-size:10px;color:#111;transform-origin:0 50%;transform:scaleX(0.9487);">Serner,A</span>
<span id="t90" class="t" style="left:198px;top:-1.41px;font-size:10px;color:#111;transform-origin:0 50%;transform:scaleX(0.9318);">2481</span>
<span id="t91" class="t" style="left:236.5px;top:-1.41px;font-size:10px;color:#111;transform-origin:0 50%;transform:scaleX(1.0000);">1-0</span>
<span id="t92" class="t" style="left:284px;top:-1.41px;font-size:10px;color:#111;transform-origin:0 50%;transform:scaleX(0.8864);">2011</span>
<span id="t93" class="t" style="left:348.5px;top:-1.41px;font-size:10px;color:#111;transform-origin:0 50%;transform:scaleX(0.9110);">12.Bc4 e6 13.e5</span>
<span id="t94" class="t" style="left:6.5px;top:12.59px;font-size:10px;color:#111;transform-origin:0 50%;transform:scaleX(1.0000);">Bogdanov,A</span>
<span id="t95" class="t" style="left:81.5px;top:12.59px;font-size:10px;color:#111;transform-origin:0 50%;transform:scaleX(0.9318);">2039</span>
<span id="t96" class="t" style="left:120px;top:12.59px;font-size:10px;color:#111;transform-origin:0 50%;transform:scaleX(0.9314);">Markovic,M</span>
<span id="t97" class="t" style="left:198px;top:12.59px;font-size:10px;color:#111;transform-origin:0 50%;transform:scaleX(0.9318);">2286</span>
<span id="t98" class="t" style="left:236.5px;top:12.59px;font-size:10px;color:#111;transform-origin:0 50%;transform:scaleX(1.1000);">½-½</span>
<span id="t99" class="t" style="left:284px;top:12.59px;font-size:10px;color:#111;transform-origin:0 50%;transform:scaleX(0.8864);">2022</span>
<span id="t100" class="t" style="left:348.5px;top:12.59px;font-size:10px;color:#111;transform-origin:0 50%;transform:scaleX(0.9375);">12.Na2 Nxa2 13</span>
<span id="t101" class="t" style="left:6.5px;top:26.59px;font-size:10px;color:#111;transform-origin:0 50%;transform:scaleX(0.8617);">Shishkin,V</span>
<span id="t102" class="t" style="left:120px;top:26.59px;font-size:10px;color:#111;transform-origin:0 50%;transform:scaleX(0.9911);">Zinchenko,Y</span>
<span id="t103" class="t" style="left:236.5px;top:26.59px;font-size:10px;color:#111;transform-origin:0 50%;transform:scaleX(1.0000);">0-1</span>
<span id="t104" class="t" style="left:284px;top:26.59px;font-size:10px;color:#111;transform-origin:0 50%;transform:scaleX(0.8864);">1991</span>
<span id="t105" class="t" style="left:348.5px;top:26.59px;font-size:10px;color:#111;transform-origin:0 50%;transform:scaleX(0.9507);">12.Bf1 Nf4 13.N</span>
<span id="t106" class="t" style="left:6.5px;top:40.58px;font-size:10px;color:#111;transform-origin:0 50%;transform:scaleX(0.9091);">Barczay,L</span>
<span id="t107" class="t" style="left:120px;top:40.58px;font-size:10px;color:#111;transform-origin:0 50%;transform:scaleX(0.9394);">Haag,E</span>
<span id="t108" class="t" style="left:236.5px;top:40.58px;font-size:10px;color:#111;transform-origin:0 50%;transform:scaleX(1.1000);">½-½</span>
<span id="t109" class="t" style="left:284px;top:40.58px;font-size:10px;color:#111;transform-origin:0 50%;transform:scaleX(0.8864);">1965</span>
<span id="t110" class="t" style="left:348.5px;top:40.58px;font-size:10px;color:#111;transform-origin:0 50%;transform:scaleX(0.9507);">12.Bf1 Nf4 13.N</span>
</div>
<div class="r" style="left:2px;top:622px;width:255px;height:13px;background:#f0f0f0;"></div>
<div class="r" style="left:16px;top:622px;width:193px;height:13px;background:#cdcdcd;"></div>
<svg class="r" style="left:6px;top:625px;" width="6" height="8" viewBox="0 0 6 8"><path d="M5 0.800l-3.500 3.200l3.500 3.200" fill="none" stroke="#404040" stroke-width="1.500"/></svg>
<svg class="r" style="left:247px;top:625px;" width="6" height="8" viewBox="0 0 6 8"><path d="M1 0.800l3.500 3.200l-3.500 3.200" fill="none" stroke="#404040" stroke-width="1.500"/></svg>
<div class="r" style="left:262px;top:622px;width:413px;height:13px;background:#f0f0f0;"></div>
<div class="r" style="left:276px;top:622px;width:208px;height:13px;background:#cdcdcd;"></div>
<svg class="r" style="left:266px;top:625px;" width="6" height="8" viewBox="0 0 6 8"><path d="M5 0.800l-3.500 3.200l3.500 3.200" fill="none" stroke="#404040" stroke-width="1.500"/></svg>
<svg class="r" style="left:665px;top:625px;" width="6" height="8" viewBox="0 0 6 8"><path d="M1 0.800l3.500 3.200l-3.500 3.200" fill="none" stroke="#404040" stroke-width="1.500"/></svg>
<div class="r" style="left:675px;top:440px;width:5px;height:195px;background:#f4f4f6;"></div>
<div class="r" style="left:676px;top:505px;width:1px;height:1px;background:#c8c8cf;"></div>
<div class="r" style="left:676px;top:507px;width:1px;height:1px;background:#c8c8cf;"></div>
<div class="r" style="left:676px;top:509px;width:1px;height:1px;background:#c8c8cf;"></div>
<div class="r" style="left:676px;top:511px;width:1px;height:1px;background:#c8c8cf;"></div>
<div class="r" style="left:676px;top:513px;width:1px;height:1px;background:#c8c8cf;"></div>
<div class="r" style="left:676px;top:515px;width:1px;height:1px;background:#c8c8cf;"></div>
<div class="r" style="left:676px;top:517px;width:1px;height:1px;background:#c8c8cf;"></div>
<div class="r" style="left:676px;top:519px;width:1px;height:1px;background:#c8c8cf;"></div>
<div class="r" style="left:676px;top:521px;width:1px;height:1px;background:#c8c8cf;"></div>
<div class="r" style="left:676px;top:523px;width:1px;height:1px;background:#c8c8cf;"></div>
<div class="r" style="left:676px;top:525px;width:1px;height:1px;background:#c8c8cf;"></div>
<div class="r" style="left:676px;top:527px;width:1px;height:1px;background:#c8c8cf;"></div>
<div class="r" style="left:676px;top:529px;width:1px;height:1px;background:#c8c8cf;"></div>
<div class="r" style="left:676px;top:531px;width:1px;height:1px;background:#c8c8cf;"></div>
<div class="r" style="left:676px;top:533px;width:1px;height:1px;background:#c8c8cf;"></div>
<div class="r" style="left:676px;top:535px;width:1px;height:1px;background:#c8c8cf;"></div>
<div class="r" style="left:676px;top:537px;width:1px;height:1px;background:#c8c8cf;"></div>
<div class="r" style="left:676px;top:539px;width:1px;height:1px;background:#c8c8cf;"></div>
<div class="r" style="left:676px;top:541px;width:1px;height:1px;background:#c8c8cf;"></div>
<div class="r" style="left:676px;top:543px;width:1px;height:1px;background:#c8c8cf;"></div>
<div class="r" style="left:676px;top:545px;width:1px;height:1px;background:#c8c8cf;"></div>
<div class="r" style="left:676px;top:547px;width:1px;height:1px;background:#c8c8cf;"></div>
<div class="r" style="left:676px;top:549px;width:1px;height:1px;background:#c8c8cf;"></div>
<div class="r" style="left:676px;top:551px;width:1px;height:1px;background:#c8c8cf;"></div>
<div class="r" style="left:676px;top:553px;width:1px;height:1px;background:#c8c8cf;"></div>
<div class="r" style="left:676px;top:555px;width:1px;height:1px;background:#c8c8cf;"></div>
<div class="r" style="left:676px;top:557px;width:1px;height:1px;background:#c8c8cf;"></div>
<div class="r" style="left:676px;top:559px;width:1px;height:1px;background:#c8c8cf;"></div>
<div class="r" style="left:676px;top:561px;width:1px;height:1px;background:#c8c8cf;"></div>
<div class="r" style="left:676px;top:563px;width:1px;height:1px;background:#c8c8cf;"></div>
<div class="r" style="left:676px;top:565px;width:1px;height:1px;background:#c8c8cf;"></div>
<div class="r" style="left:676px;top:567px;width:1px;height:1px;background:#c8c8cf;"></div>
<div class="r" style="left:676px;top:569px;width:1px;height:1px;background:#c8c8cf;"></div>
<div class="r" style="left:676px;top:571px;width:1px;height:1px;background:#c8c8cf;"></div>
<div class="r" style="left:676px;top:573px;width:1px;height:1px;background:#c8c8cf;"></div>
<div class="r" style="left:680px;top:440px;width:172px;height:97px;background:linear-gradient(100deg,#47444a 0%,#5c595f 45%,#8b888e 100%);"></div>
<div class="r" style="left:723.7px;top:446.7px;width:83px;height:83px;background:#4f4c52;"></div>
<div class="r" style="left:724.7px;top:447.7px;width:80.6px;height:80.6px;background:#efefef;"></div>
<svg class="r" style="left:724.7px;top:447.7px;" width="80.6" height="80.6" viewBox="0 0 80.6 80.6"><g fill="#8e8a92"><rect x="10.075" y="0" width="10.075" height="10.075"/><rect x="30.225" y="0" width="10.075" height="10.075"/><rect x="50.375" y="0" width="10.075" height="10.075"/><rect x="70.525" y="0" width="10.075" height="10.075"/><rect x="0" y="10.075" width="10.075" height="10.075"/><rect x="20.15" y="10.075" width="10.075" height="10.075"/><rect x="40.3" y="10.075" width="10.075" height="10.075"/><rect x="60.45" y="10.075" width="10.075" height="10.075"/><rect x="10.075" y="20.15" width="10.075" height="10.075"/><rect x="30.225" y="20.15" width="10.075" height="10.075"/><rect x="50.375" y="20.15" width="10.075" height="10.075"/><rect x="70.525" y="20.15" width="10.075" height="10.075"/><rect x="0" y="30.225" width="10.075" height="10.075"/><rect x="20.15" y="30.225" width="10.075" height="10.075"/><rect x="40.3" y="30.225" width="10.075" height="10.075"/><rect x="60.45" y="30.225" width="10.075" height="10.075"/><rect x="10.075" y="40.3" width="10.075" height="10.075"/><rect x="30.225" y="40.3" width="10.075" height="10.075"/><rect x="50.375" y="40.3" width="10.075" height="10.075"/><rect x="70.525" y="40.3" width="10.075" height="10.075"/><rect x="0" y="50.375" width="10.075" height="10.075"/><rect x="20.15" y="50.375" width="10.075" height="10.075"/><rect x="40.3" y="50.375" width="10.075" height="10.075"/><rect x="60.45" y="50.375" width="10.075" height="10.075"/><rect x="10.075" y="60.45" width="10.075" height="10.075"/><rect x="30.225" y="60.45" width="10.075" height="10.075"/><rect x="50.375" y="60.45" width="10.075" height="10.075"/><rect x="70.525" y="60.45" width="10.075" height="10.075"/><rect x="0" y="70.525" width="10.075" height="10.075"/><rect x="20.15" y="70.525" width="10.075" height="10.075"/><rect x="40.3" y="70.525" width="10.075" height="10.075"/><rect x="60.45" y="70.525" width="10.075" height="10.075"/></g></svg>
<svg class="r" style="left:724.7px;top:447.7px;" width="10.075" height="10.075" viewBox="0 0 30 30"><path d="M6 27.800v-2.600l2.300-2v-1.600l2.200-1.400v-8.400l-2.300-1.600v-4.200h3v1.700h2.300v-1.700h3v1.700h2.300v-1.700h3v4.200l-2.300 1.600v8.400l2.200 1.400v1.600l2.300 2v2.600z" fill="#1d1d21" stroke="#101013" stroke-width="0.8" stroke-linejoin="round"/><path d="M8.800 10.400h12.400M10.700 12h8.600M10.700 20.200h8.600M8.600 21.800h12.800M8.400 23.400h13.200M7 25.300h16" fill="none" stroke="#d8d8d8" stroke-width="0.800"/></svg>
<svg class="r" style="left:744.85px;top:447.7px;" width="10.075" height="10.075" viewBox="0 0 30 30"><path d="M15 24.300c-2 2.200-5 1.700-7.500 1.700c-1.600 0-3.100 0.500-3.900 1.600l1.300 1.400c1-0.900 2.500-0.900 4-0.900c2.600 0 4.900-0.300 6.100-1.900c1.200 1.600 3.500 1.900 6.100 1.900c1.500 0 3 0 4 0.900l1.300-1.400c-0.800-1.100-2.300-1.600-3.900-1.600c-2.500 0-5.500 0.500-7.500-1.700z" fill="#1d1d21" stroke="#101013" stroke-width="0.8" stroke-linejoin="round"/><path d="M11.200 20.300h7.600v3.600h-7.600z" fill="#1d1d21" stroke="#101013" stroke-width="0.8" stroke-linejoin="round"/><path d="M15 8.600c-4.200 2.200-6.200 5.400-6.200 7.800c0 2 1.300 3.300 2.800 4h6.800c1.500-0.700 2.800-2 2.800-4c0-2.400-2-5.600-6.200-7.800z" fill="#1d1d21" stroke="#101013" stroke-width="0.8" stroke-linejoin="round"/><circle cx="15" cy="7" r="1.800" fill="#1d1d21" stroke="#101013" stroke-width="0.8"/><path d="M15 12v4.600M12.700 14.300h4.600" stroke="#d8d8d8" stroke-width="1"/><path d="M11.500 22.100h7" stroke="#d8d8d8" stroke-width="0.700"/></svg>
<svg class="r" style="left:775.075px;top:447.7px;" width="10.075" height="10.075" viewBox="0 0 30 30"><path d="M6 27.800v-2.600l2.300-2v-1.600l2.200-1.400v-8.400l-2.300-1.600v-4.200h3v1.700h2.300v-1.700h3v1.700h2.300v-1.700h3v4.200l-2.300 1.600v8.400l2.200 1.400v1.600l2.300 2v2.600z" fill="#1d1d21" stroke="#101013" stroke-width="0.8" stroke-linejoin="round"/><path d="M8.800 10.400h12.400M10.700 12h8.600M10.700 20.200h8.600M8.600 21.800h12.800M8.400 23.400h13.200M7 25.300h16" fill="none" stroke="#d8d8d8" stroke-width="0.800"/></svg>
<svg class="r" style="left:785.15px;top:447.7px;" width="10.075" height="10.075" viewBox="0 0 30 30"><path d="M15 4.600v5.400M12.900 6.600h4.200" stroke="#101013" stroke-width="1.300" fill="none"/><path d="M15 20.800c-2-4.200-4.200-8.400-8.200-8.400c-2.500 0-4 2-4 4.200c0 2.500 2 4.600 4.600 6.400v3.200c0 1.300 3.500 2.300 7.600 2.300s7.600-1 7.600-2.300v-3.200c2.600-1.800 4.600-3.900 4.600-6.400c0-2.200-1.500-4.200-4-4.200c-4 0-6.200 4.200-8.200 8.400z" fill="#1d1d21" stroke="#101013" stroke-width="0.8" stroke-linejoin="round"/><path d="M15 9.800c-1.600 1.600-2.100 3.600-2.100 5.600l2.100 5l2.100-5c0-2-0.500-4-2.100-5.600z" fill="#1d1d21" stroke="#101013" stroke-width="0.8" stroke-linejoin="round"/><path d="M7.400 23c2.500-1.300 12.700-1.300 15.200 0M7.400 24.800c2.500-1.300 12.700-1.300 15.200 0M7.400 26.500c2.500-1.300 12.700-1.300 15.200 0" fill="none" stroke="#d8d8d8" stroke-width="0.800"/><path d="M13.400 19.500c-1.600-3.400-3.500-5.900-6.400-5.900c-1.800 0-2.900 1.300-2.900 3c0 1.900 1.500 3.500 3.600 5.100M16.600 19.500c1.600-3.400 3.500-5.900 6.400-5.900c1.800 0 2.900 1.300 2.900 3c0 1.900-1.500 3.500-3.600 5.100" fill="none" stroke="#d8d8d8" stroke-width="0.800"/></svg>
<svg class="r" style="left:734.775px;top:457.775px;" width="10.075" height="10.075" viewBox="0 0 30 30"><path d="M15 6.300a3.200 3.200 0 0 1 2.200 5.500c1.800 0.900 2.700 2.500 2.700 4.200c0 1.500-0.700 2.700-1.600 3.500c2.800 1.100 4.800 3.500 4.800 8h-16.200c0-4.500 2-6.900 4.800-8c-0.900-0.800-1.600-2-1.600-3.500c0-1.700 0.900-3.300 2.700-4.200a3.200 3.200 0 0 1 2.200-5.500z" fill="#1d1d21" stroke="#101013" stroke-width="0.8" stroke-linejoin="round"/></svg>
<svg class="r" style="left:744.85px;top:457.775px;" width="10.075" height="10.075" viewBox="0 0 30 30"><path d="M7.600 21L4.400 10.600L10.300 17.600L9.600 8L13.400 17L15 7.300L16.600 17L20.400 8L19.700 17.600L25.600 10.600L22.400 21c0.600 1.400 0.800 2.600 0.400 3.900c0 1.600-3.500 3-7.800 3s-7.800-1.400-7.800-3c-0.400-1.300-0.200-2.500 0.400-3.900z" fill="#1d1d21" stroke="#101013" stroke-width="0.8" stroke-linejoin="round"/><circle cx="4.3" cy="9.6" r="1.500" fill="#1d1d21" stroke="#101013" stroke-width="0.8"/><circle cx="9.5" cy="7" r="1.500" fill="#1d1d21" stroke="#101013" stroke-width="0.8"/><circle cx="15" cy="6.3" r="1.500" fill="#1d1d21" stroke="#101013" stroke-width="0.8"/><circle cx="20.5" cy="7" r="1.500" fill="#1d1d21" stroke="#101013" stroke-width="0.8"/><circle cx="25.7" cy="9.6" r="1.500" fill="#1d1d21" stroke="#101013" stroke-width="0.8"/><path d="M7.800 21.400c2 1.100 12.400 1.100 14.400 0M7.400 23.300c2 1.200 13.200 1.200 15.200 0M7.400 25.200c2 1.200 13.200 1.200 15.200 0" fill="none" stroke="#d8d8d8" stroke-width="0.800"/></svg>
<svg class="r" style="left:765px;top:457.775px;" width="10.075" height="10.075" viewBox="0 0 30 30"><path d="M15 6.300a3.200 3.200 0 0 1 2.200 5.500c1.800 0.900 2.700 2.500 2.700 4.200c0 1.500-0.700 2.700-1.600 3.500c2.800 1.100 4.800 3.500 4.800 8h-16.200c0-4.500 2-6.900 4.800-8c-0.900-0.800-1.600-2-1.600-3.500c0-1.700 0.900-3.300 2.700-4.200a3.200 3.200 0 0 1 2.200-5.500z" fill="#1d1d21" stroke="#101013" stroke-width="0.8" stroke-linejoin="round"/></svg>
<svg class="r" style="left:775.075px;top:457.775px;" width="10.075" height="10.075" viewBox="0 0 30 30"><path d="M15 6.300a3.200 3.200 0 0 1 2.200 5.500c1.800 0.900 2.700 2.500 2.700 4.200c0 1.500-0.700 2.700-1.600 3.500c2.800 1.100 4.800 3.500 4.800 8h-16.200c0-4.500 2-6.900 4.800-8c-0.900-0.800-1.600-2-1.600-3.500c0-1.700 0.900-3.300 2.700-4.200a3.200 3.200 0 0 1 2.200-5.500z" fill="#1d1d21" stroke="#101013" stroke-width="0.8" stroke-linejoin="round"/></svg>
<svg class="r" style="left:785.15px;top:457.775px;" width="10.075" height="10.075" viewBox="0 0 30 30"><path d="M15 24.300c-2 2.200-5 1.700-7.500 1.700c-1.600 0-3.100 0.500-3.900 1.600l1.300 1.400c1-0.900 2.500-0.900 4-0.900c2.600 0 4.900-0.300 6.100-1.900c1.200 1.600 3.500 1.900 6.100 1.900c1.500 0 3 0 4 0.900l1.300-1.400c-0.800-1.100-2.300-1.600-3.900-1.600c-2.500 0-5.500 0.500-7.500-1.700z" fill="#1d1d21" stroke="#101013" stroke-width="0.8" stroke-linejoin="round"/><path d="M11.200 20.300h7.600v3.600h-7.600z" fill="#1d1d21" stroke="#101013" stroke-width="0.8" stroke-linejoin="round"/><path d="M15 8.600c-4.200 2.200-6.200 5.400-6.200 7.800c0 2 1.300 3.300 2.800 4h6.800c1.500-0.700 2.800-2 2.800-4c0-2.400-2-5.600-6.200-7.800z" fill="#1d1d21" stroke="#101013" stroke-width="0.8" stroke-linejoin="round"/><circle cx="15" cy="7" r="1.800" fill="#1d1d21" stroke="#101013" stroke-width="0.8"/><path d="M15 12v4.600M12.700 14.300h4.600" stroke="#d8d8d8" stroke-width="1"/><path d="M11.500 22.100h7" stroke="#d8d8d8" stroke-width="0.700"/></svg>
<svg class="r" style="left:795.225px;top:457.775px;" width="10.075" height="10.075" viewBox="0 0 30 30"><path d="M15 6.300a3.200 3.200 0 0 1 2.200 5.500c1.800 0.900 2.700 2.500 2.700 4.200c0 1.500-0.700 2.700-1.600 3.500c2.800 1.100 4.800 3.500 4.800 8h-16.200c0-4.500 2-6.900 4.800-8c-0.900-0.800-1.600-2-1.600-3.500c0-1.700 0.900-3.300 2.700-4.200a3.200 3.200 0 0 1 2.200-5.500z" fill="#1d1d21" stroke="#101013" stroke-width="0.8" stroke-linejoin="round"/></svg>
<svg class="r" style="left:744.85px;top:467.85px;" width="10.075" height="10.075" viewBox="0 0 30 30"><path d="M15 6.300a3.200 3.200 0 0 1 2.200 5.500c1.800 0.900 2.700 2.500 2.700 4.200c0 1.500-0.700 2.700-1.600 3.500c2.800 1.100 4.800 3.500 4.800 8h-16.200c0-4.500 2-6.900 4.800-8c-0.900-0.800-1.600-2-1.600-3.500c0-1.700 0.900-3.300 2.700-4.200a3.200 3.200 0 0 1 2.200-5.500z" fill="#1d1d21" stroke="#101013" stroke-width="0.8" stroke-linejoin="round"/></svg>
<svg class="r" style="left:754.925px;top:467.85px;" width="10.075" height="10.075" viewBox="0 0 30 30"><path d="M15 6.300a3.200 3.200 0 0 1 2.200 5.500c1.800 0.900 2.700 2.500 2.700 4.200c0 1.500-0.700 2.700-1.600 3.500c2.800 1.100 4.800 3.500 4.800 8h-16.200c0-4.500 2-6.900 4.800-8c-0.900-0.800-1.600-2-1.600-3.500c0-1.700 0.900-3.300 2.700-4.200a3.200 3.200 0 0 1 2.200-5.500z" fill="#1d1d21" stroke="#101013" stroke-width="0.8" stroke-linejoin="round"/></svg>
<svg class="r" style="left:775.075px;top:467.85px;" width="10.075" height="10.075" viewBox="0 0 30 30"><path d="M11 28.200c0.300-3.500 3.500-5.500 4.800-8.400c-1.800 1.600-3.800 1.400-5.300 2.100c-1.200 0.800-2.400 1.600-3.600 0.900c-1.500-0.800-2.800-2.400-2.600-3.800c0.500-2.700 3-5 4.200-8.200c-0.400-1.800-0.300-3.600 0.300-5.200c1.200 0.700 2.100 1.800 2.700 3.100c0.400-1.200 1.100-2.300 2-3.100c0.900 0.900 1.400 2.100 1.600 3.300c6.500 1.500 11.300 8 11.600 19.300z" fill="#1d1d21" stroke="#101013" stroke-width="0.8" stroke-linejoin="round"/><circle cx="9.800" cy="13.600" r="0.900" fill="#d8d8d8"/><path d="M6 19.500l-0.500 0.900" stroke="#d8d8d8" stroke-width="0.800"/><path d="M17.500 9.500c5 2 8 8 8 18" fill="none" stroke="#cfcfcf" stroke-width="0.800"/></svg>
<svg class="r" style="left:785.15px;top:467.85px;" width="10.075" height="10.075" viewBox="0 0 30 30"><path d="M15 6.300a3.200 3.200 0 0 1 2.200 5.500c1.800 0.900 2.700 2.500 2.700 4.200c0 1.500-0.700 2.700-1.600 3.500c2.800 1.100 4.800 3.500 4.800 8h-16.200c0-4.500 2-6.900 4.800-8c-0.900-0.800-1.600-2-1.600-3.500c0-1.700 0.900-3.300 2.700-4.200a3.200 3.200 0 0 1 2.200-5.500z" fill="#1d1d21" stroke="#101013" stroke-width="0.8" stroke-linejoin="round"/></svg>
<svg class="r" style="left:724.7px;top:477.925px;" width="10.075" height="10.075" viewBox="0 0 30 30"><path d="M15 6.300a3.200 3.200 0 0 1 2.200 5.500c1.800 0.900 2.700 2.500 2.700 4.200c0 1.500-0.700 2.700-1.600 3.500c2.800 1.100 4.800 3.500 4.800 8h-16.200c0-4.500 2-6.900 4.800-8c-0.900-0.800-1.600-2-1.600-3.500c0-1.700 0.900-3.300 2.700-4.200a3.200 3.200 0 0 1 2.200-5.500z" fill="#1d1d21" stroke="#101013" stroke-width="0.8" stroke-linejoin="round"/></svg>
<svg class="r" style="left:724.7px;top:488px;" width="10.075" height="10.075" viewBox="0 0 30 30"><path d="M15 6.300a3.200 3.200 0 0 1 2.200 5.500c1.800 0.900 2.700 2.500 2.700 4.200c0 1.500-0.700 2.700-1.600 3.500c2.800 1.100 4.800 3.500 4.800 8h-16.200c0-4.500 2-6.900 4.800-8c-0.900-0.800-1.600-2-1.600-3.500c0-1.700 0.900-3.300 2.700-4.200a3.200 3.200 0 0 1 2.200-5.500z" fill="#f2e8b4" stroke="#6a5a28" stroke-width="1" stroke-linejoin="round"/></svg>
<svg class="r" style="left:734.775px;top:488px;" width="10.075" height="10.075" viewBox="0 0 30 30"><path d="M11 28.200c0.300-3.500 3.500-5.500 4.800-8.400c-1.800 1.600-3.800 1.400-5.300 2.100c-1.200 0.800-2.400 1.600-3.600 0.900c-1.500-0.800-2.800-2.400-2.600-3.800c0.500-2.700 3-5 4.200-8.200c-0.400-1.800-0.300-3.600 0.300-5.200c1.200 0.700 2.100 1.800 2.700 3.100c0.400-1.200 1.100-2.300 2-3.100c0.900 0.900 1.400 2.100 1.600 3.300c6.500 1.500 11.300 8 11.600 19.300z" fill="#1d1d21" stroke="#101013" stroke-width="0.8" stroke-linejoin="round"/><circle cx="9.800" cy="13.600" r="0.900" fill="#d8d8d8"/><path d="M6 19.500l-0.500 0.900" stroke="#d8d8d8" stroke-width="0.800"/><path d="M17.500 9.500c5 2 8 8 8 18" fill="none" stroke="#cfcfcf" stroke-width="0.800"/></svg>
<svg class="r" style="left:754.925px;top:488px;" width="10.075" height="10.075" viewBox="0 0 30 30"><path d="M15 6.300a3.200 3.200 0 0 1 2.200 5.500c1.800 0.900 2.700 2.500 2.700 4.200c0 1.500-0.700 2.700-1.600 3.500c2.800 1.100 4.800 3.500 4.800 8h-16.200c0-4.500 2-6.900 4.800-8c-0.900-0.800-1.600-2-1.600-3.500c0-1.700 0.900-3.300 2.700-4.200a3.200 3.200 0 0 1 2.200-5.500z" fill="#f2e8b4" stroke="#6a5a28" stroke-width="1" stroke-linejoin="round"/></svg>
<svg class="r" style="left:765px;top:488px;" width="10.075" height="10.075" viewBox="0 0 30 30"><path d="M15 6.300a3.200 3.200 0 0 1 2.200 5.500c1.800 0.900 2.700 2.500 2.700 4.200c0 1.500-0.700 2.700-1.600 3.500c2.800 1.100 4.800 3.500 4.800 8h-16.200c0-4.500 2-6.900 4.800-8c-0.900-0.800-1.600-2-1.600-3.500c0-1.700 0.900-3.300 2.700-4.200a3.200 3.200 0 0 1 2.200-5.500z" fill="#f2e8b4" stroke="#6a5a28" stroke-width="1" stroke-linejoin="round"/></svg>
<svg class="r" style="left:744.85px;top:498.075px;" width="10.075" height="10.075" viewBox="0 0 30 30"><path d="M11 28.200c0.300-3.500 3.500-5.500 4.800-8.400c-1.800 1.600-3.800 1.400-5.300 2.100c-1.200 0.800-2.400 1.600-3.600 0.900c-1.500-0.800-2.800-2.400-2.600-3.800c0.500-2.700 3-5 4.200-8.200c-0.400-1.800-0.300-3.600 0.300-5.200c1.200 0.700 2.100 1.800 2.700 3.100c0.400-1.200 1.100-2.300 2-3.100c0.900 0.900 1.400 2.100 1.600 3.300c6.500 1.500 11.300 8 11.600 19.300z" fill="#f2e8b4" stroke="#6a5a28" stroke-width="1" stroke-linejoin="round"/><circle cx="9.800" cy="13.600" r="0.900" fill="#6a5a28"/><path d="M6 19.500l-0.500 0.900" stroke="#6a5a28" stroke-width="0.800"/><path d="M15.800 19.800c1.200-1.400 1.800-3 1.600-4.800" fill="none" stroke="#6a5a28" stroke-width="0.800"/></svg>
<svg class="r" style="left:765px;top:498.075px;" width="10.075" height="10.075" viewBox="0 0 30 30"><path d="M15 24.300c-2 2.200-5 1.700-7.500 1.700c-1.600 0-3.100 0.500-3.900 1.600l1.300 1.400c1-0.900 2.500-0.900 4-0.900c2.600 0 4.900-0.300 6.100-1.900c1.200 1.600 3.500 1.900 6.100 1.900c1.500 0 3 0 4 0.900l1.300-1.400c-0.800-1.100-2.300-1.600-3.900-1.600c-2.500 0-5.500 0.500-7.500-1.700z" fill="#f2e8b4" stroke="#6a5a28" stroke-width="1" stroke-linejoin="round"/><path d="M11.200 20.300h7.600v3.600h-7.600z" fill="#f2e8b4" stroke="#6a5a28" stroke-width="1" stroke-linejoin="round"/><path d="M15 8.600c-4.200 2.200-6.200 5.400-6.200 7.800c0 2 1.300 3.300 2.800 4h6.800c1.500-0.700 2.800-2 2.800-4c0-2.400-2-5.600-6.200-7.800z" fill="#f2e8b4" stroke="#6a5a28" stroke-width="1" stroke-linejoin="round"/><circle cx="15" cy="7" r="1.800" fill="#f2e8b4" stroke="#6a5a28" stroke-width="1"/><path d="M15 12v4.600M12.700 14.300h4.600" stroke="#6a5a28" stroke-width="1"/><path d="M11.500 22.100h7" stroke="#6a5a28" stroke-width="0.700"/></svg>
<svg class="r" style="left:775.075px;top:498.075px;" width="10.075" height="10.075" viewBox="0 0 30 30"><path d="M11 28.200c0.300-3.500 3.500-5.500 4.800-8.400c-1.800 1.600-3.800 1.400-5.300 2.100c-1.200 0.800-2.400 1.600-3.600 0.900c-1.500-0.800-2.800-2.400-2.600-3.800c0.500-2.700 3-5 4.200-8.200c-0.400-1.800-0.300-3.600 0.300-5.200c1.200 0.700 2.100 1.800 2.700 3.100c0.400-1.200 1.100-2.300 2-3.100c0.900 0.900 1.400 2.100 1.600 3.300c6.500 1.500 11.300 8 11.600 19.300z" fill="#f2e8b4" stroke="#6a5a28" stroke-width="1" stroke-linejoin="round"/><circle cx="9.800" cy="13.600" r="0.900" fill="#6a5a28"/><path d="M6 19.500l-0.500 0.900" stroke="#6a5a28" stroke-width="0.800"/><path d="M15.800 19.800c1.200-1.400 1.800-3 1.600-4.800" fill="none" stroke="#6a5a28" stroke-width="0.800"/></svg>
<svg class="r" style="left:795.225px;top:498.075px;" width="10.075" height="10.075" viewBox="0 0 30 30"><path d="M15 6.300a3.200 3.200 0 0 1 2.200 5.500c1.800 0.900 2.700 2.500 2.700 4.200c0 1.500-0.700 2.700-1.600 3.500c2.800 1.100 4.800 3.500 4.800 8h-16.200c0-4.500 2-6.900 4.800-8c-0.900-0.800-1.600-2-1.600-3.500c0-1.700 0.900-3.300 2.700-4.200a3.200 3.200 0 0 1 2.200-5.500z" fill="#f2e8b4" stroke="#6a5a28" stroke-width="1" stroke-linejoin="round"/></svg>
<svg class="r" style="left:734.775px;top:508.15px;" width="10.075" height="10.075" viewBox="0 0 30 30"><path d="M15 6.300a3.200 3.200 0 0 1 2.200 5.500c1.800 0.900 2.700 2.500 2.700 4.200c0 1.500-0.700 2.700-1.600 3.500c2.800 1.100 4.800 3.500 4.800 8h-16.200c0-4.500 2-6.900 4.800-8c-0.900-0.800-1.600-2-1.600-3.500c0-1.700 0.900-3.300 2.700-4.200a3.200 3.200 0 0 1 2.200-5.500z" fill="#f2e8b4" stroke="#6a5a28" stroke-width="1" stroke-linejoin="round"/></svg>
<svg class="r" style="left:744.85px;top:508.15px;" width="10.075" height="10.075" viewBox="0 0 30 30"><path d="M15 6.300a3.200 3.200 0 0 1 2.200 5.500c1.800 0.900 2.700 2.500 2.700 4.200c0 1.500-0.700 2.700-1.600 3.500c2.800 1.100 4.800 3.500 4.800 8h-16.200c0-4.500 2-6.900 4.800-8c-0.900-0.800-1.600-2-1.600-3.500c0-1.700 0.900-3.300 2.700-4.200a3.200 3.200 0 0 1 2.200-5.500z" fill="#f2e8b4" stroke="#6a5a28" stroke-width="1" stroke-linejoin="round"/></svg>
<svg class="r" style="left:754.925px;top:508.15px;" width="10.075" height="10.075" viewBox="0 0 30 30"><path d="M7.600 21L4.400 10.600L10.300 17.600L9.600 8L13.400 17L15 7.300L16.600 17L20.400 8L19.700 17.600L25.600 10.600L22.400 21c0.600 1.400 0.800 2.600 0.400 3.900c0 1.600-3.500 3-7.800 3s-7.800-1.400-7.800-3c-0.400-1.300-0.200-2.500 0.400-3.900z" fill="#f2e8b4" stroke="#6a5a28" stroke-width="1" stroke-linejoin="round"/><circle cx="4.3" cy="9.6" r="1.500" fill="#f2e8b4" stroke="#6a5a28" stroke-width="1"/><circle cx="9.5" cy="7" r="1.500" fill="#f2e8b4" stroke="#6a5a28" stroke-width="1"/><circle cx="15" cy="6.3" r="1.500" fill="#f2e8b4" stroke="#6a5a28" stroke-width="1"/><circle cx="20.5" cy="7" r="1.500" fill="#f2e8b4" stroke="#6a5a28" stroke-width="1"/><circle cx="25.7" cy="9.6" r="1.500" fill="#f2e8b4" stroke="#6a5a28" stroke-width="1"/><path d="M7.800 21.400c2 1.100 12.400 1.100 14.400 0M7.400 23.300c2 1.200 13.200 1.200 15.200 0M7.400 25.200c2 1.200 13.200 1.200 15.200 0" fill="none" stroke="#6a5a28" stroke-width="0.800"/></svg>
<svg class="r" style="left:765px;top:508.15px;" width="10.075" height="10.075" viewBox="0 0 30 30"><path d="M15 24.300c-2 2.200-5 1.700-7.500 1.700c-1.600 0-3.100 0.500-3.900 1.600l1.300 1.400c1-0.900 2.500-0.900 4-0.900c2.600 0 4.900-0.300 6.100-1.900c1.200 1.600 3.500 1.900 6.100 1.900c1.500 0 3 0 4 0.900l1.300-1.400c-0.800-1.100-2.300-1.600-3.900-1.600c-2.500 0-5.500 0.500-7.500-1.700z" fill="#f2e8b4" stroke="#6a5a28" stroke-width="1" stroke-linejoin="round"/><path d="M11.200 20.300h7.600v3.600h-7.600z" fill="#f2e8b4" stroke="#6a5a28" stroke-width="1" stroke-linejoin="round"/><path d="M15 8.600c-4.200 2.200-6.200 5.400-6.200 7.800c0 2 1.300 3.300 2.800 4h6.800c1.500-0.700 2.800-2 2.800-4c0-2.400-2-5.600-6.200-7.800z" fill="#f2e8b4" stroke="#6a5a28" stroke-width="1" stroke-linejoin="round"/><circle cx="15" cy="7" r="1.800" fill="#f2e8b4" stroke="#6a5a28" stroke-width="1"/><path d="M15 12v4.600M12.700 14.300h4.600" stroke="#6a5a28" stroke-width="1"/><path d="M11.500 22.100h7" stroke="#6a5a28" stroke-width="0.700"/></svg>
<svg class="r" style="left:775.075px;top:508.15px;" width="10.075" height="10.075" viewBox="0 0 30 30"><path d="M15 6.300a3.200 3.200 0 0 1 2.200 5.500c1.800 0.900 2.700 2.500 2.700 4.200c0 1.500-0.700 2.700-1.600 3.500c2.800 1.100 4.800 3.500 4.800 8h-16.200c0-4.500 2-6.900 4.800-8c-0.900-0.800-1.600-2-1.600-3.500c0-1.700 0.900-3.300 2.700-4.200a3.200 3.200 0 0 1 2.200-5.500z" fill="#f2e8b4" stroke="#6a5a28" stroke-width="1" stroke-linejoin="round"/></svg>
<svg class="r" style="left:785.15px;top:508.15px;" width="10.075" height="10.075" viewBox="0 0 30 30"><path d="M15 6.300a3.200 3.200 0 0 1 2.200 5.500c1.800 0.900 2.700 2.500 2.700 4.200c0 1.500-0.700 2.700-1.600 3.500c2.800 1.100 4.800 3.500 4.800 8h-16.200c0-4.500 2-6.900 4.800-8c-0.900-0.800-1.600-2-1.600-3.500c0-1.700 0.900-3.300 2.700-4.200a3.200 3.200 0 0 1 2.200-5.500z" fill="#f2e8b4" stroke="#6a5a28" stroke-width="1" stroke-linejoin="round"/></svg>
<svg class="r" style="left:724.7px;top:518.225px;" width="10.075" height="10.075" viewBox="0 0 30 30"><path d="M6 27.800v-2.600l2.300-2v-1.600l2.200-1.400v-8.400l-2.300-1.600v-4.200h3v1.700h2.300v-1.700h3v1.700h2.300v-1.700h3v4.200l-2.300 1.600v8.400l2.200 1.400v1.600l2.300 2v2.600z" fill="#f2e8b4" stroke="#6a5a28" stroke-width="1" stroke-linejoin="round"/><path d="M8.800 10.400h12.400M10.700 12h8.600M10.700 20.200h8.600M8.600 21.800h12.800M8.400 23.400h13.200M7 25.300h16" fill="none" stroke="#6a5a28" stroke-width="0.800"/></svg>
<svg class="r" style="left:775.075px;top:518.225px;" width="10.075" height="10.075" viewBox="0 0 30 30"><path d="M6 27.800v-2.600l2.300-2v-1.600l2.200-1.400v-8.400l-2.300-1.600v-4.200h3v1.700h2.300v-1.700h3v1.700h2.300v-1.700h3v4.200l-2.300 1.600v8.400l2.200 1.400v1.600l2.300 2v2.600z" fill="#f2e8b4" stroke="#6a5a28" stroke-width="1" stroke-linejoin="round"/><path d="M8.800 10.400h12.400M10.700 12h8.600M10.700 20.200h8.600M8.600 21.800h12.800M8.400 23.400h13.200M7 25.300h16" fill="none" stroke="#6a5a28" stroke-width="0.800"/></svg>
<svg class="r" style="left:785.15px;top:518.225px;" width="10.075" height="10.075" viewBox="0 0 30 30"><path d="M15 4.600v5.400M12.900 6.600h4.200" stroke="#6a5a28" stroke-width="1.300" fill="none"/><path d="M15 20.800c-2-4.200-4.200-8.400-8.200-8.400c-2.500 0-4 2-4 4.200c0 2.500 2 4.600 4.600 6.400v3.200c0 1.300 3.500 2.300 7.600 2.300s7.600-1 7.600-2.300v-3.200c2.600-1.800 4.600-3.900 4.600-6.400c0-2.200-1.500-4.200-4-4.200c-4 0-6.200 4.200-8.200 8.400z" fill="#f2e8b4" stroke="#6a5a28" stroke-width="1" stroke-linejoin="round"/><path d="M15 9.800c-1.600 1.600-2.100 3.600-2.100 5.600l2.100 5l2.100-5c0-2-0.500-4-2.100-5.600z" fill="#f2e8b4" stroke="#6a5a28" stroke-width="1" stroke-linejoin="round"/><path d="M7.400 23c2.500-1.300 12.700-1.300 15.200 0M7.400 24.800c2.500-1.300 12.700-1.300 15.200 0M7.400 26.500c2.500-1.300 12.700-1.300 15.200 0" fill="none" stroke="#6a5a28" stroke-width="0.800"/></svg>
<svg class="r" style="left:748px;top:449px;" width="16" height="16" viewBox="0 0 16 16"><path d="M13 5L4.500 14" stroke="#f0e838" stroke-width="1.700" stroke-linecap="round"/></svg>
<div class="r" style="left:680px;top:537px;width:172px;height:5.5px;background:#f0f0f3;"></div>
<div class="r" style="left:732px;top:539px;width:1.5px;height:2px;background:#c4c4cc;"></div>
<div class="r" style="left:735px;top:539px;width:1.5px;height:2px;background:#c4c4cc;"></div>
<div class="r" style="left:738px;top:539px;width:1.5px;height:2px;background:#c4c4cc;"></div>
<div class="r" style="left:741px;top:539px;width:1.5px;height:2px;background:#c4c4cc;"></div>
<div class="r" style="left:744px;top:539px;width:1.5px;height:2px;background:#c4c4cc;"></div>
<div class="r" style="left:747px;top:539px;width:1.5px;height:2px;background:#c4c4cc;"></div>
<div class="r" style="left:750px;top:539px;width:1.5px;height:2px;background:#c4c4cc;"></div>
<div class="r" style="left:753px;top:539px;width:1.5px;height:2px;background:#c4c4cc;"></div>
<div class="r" style="left:756px;top:539px;width:1.5px;height:2px;background:#c4c4cc;"></div>
<div class="r" style="left:759px;top:539px;width:1.5px;height:2px;background:#c4c4cc;"></div>
<div class="r" style="left:762px;top:539px;width:1.5px;height:2px;background:#c4c4cc;"></div>
<div class="r" style="left:765px;top:539px;width:1.5px;height:2px;background:#c4c4cc;"></div>
<div class="r" style="left:768px;top:539px;width:1.5px;height:2px;background:#c4c4cc;"></div>
<div class="r" style="left:771px;top:539px;width:1.5px;height:2px;background:#c4c4cc;"></div>
<div class="r" style="left:774px;top:539px;width:1.5px;height:2px;background:#c4c4cc;"></div>
<div class="r" style="left:777px;top:539px;width:1.5px;height:2px;background:#c4c4cc;"></div>
<div class="r" style="left:780px;top:539px;width:1.5px;height:2px;background:#c4c4cc;"></div>
<div class="r" style="left:783px;top:539px;width:1.5px;height:2px;background:#c4c4cc;"></div>
<div class="r" style="left:786px;top:539px;width:1.5px;height:2px;background:#c4c4cc;"></div>
<div class="r" style="left:789px;top:539px;width:1.5px;height:2px;background:#c4c4cc;"></div>
<div class="r" style="left:792px;top:539px;width:1.5px;height:2px;background:#c4c4cc;"></div>
<div class="r" style="left:795px;top:539px;width:1.5px;height:2px;background:#c4c4cc;"></div>
<div class="r" style="left:798px;top:539px;width:1.5px;height:2px;background:#c4c4cc;"></div>
<div class="r" style="left:801px;top:539px;width:1.5px;height:2px;background:#c4c4cc;"></div>
<div class="r" style="left:680px;top:542.5px;width:172px;height:92.5px;background:#fff;"></div>
<div class="r" style="left:680px;top:564px;width:172px;height:1px;background:#3a3a78;"></div>
<div class="r" style="left:680px;top:615.2px;width:172px;height:2.2px;background:#111;"></div>
<div class="r" style="left:679.5px;top:537px;width:1px;height:98px;background:#b4b4b8;"></div>
<div class="r" style="left:680px;top:541.8px;width:172px;height:1px;background:#bcbcc0;"></div>
<svg class="r" style="left:842px;top:569.5px;" width="7" height="5" viewBox="0 0 7 5"><path d="M0 4.500h7l-3.500-4z" fill="#777"/></svg>
<div class="r" style="left:842.5px;top:583px;width:6px;height:14px;background:#cdcddb;"></div>
<svg class="r" style="left:842px;top:602.5px;" width="7" height="5" viewBox="0 0 7 5"><path d="M0 0.500h7l-3.500 4z" fill="#777"/></svg>
<div class="r" style="left:856px;top:120px;width:1px;height:515px;background:#a4aab6;"></div>
<div class="r" style="left:857px;top:120px;width:741px;height:515px;background:#fff;"></div>
<div class="r" style="left:857px;top:119.5px;width:741px;height:16.5px;background:linear-gradient(#cdd5df,#b5c0ce);"></div>
<span id="t111" class="t" style="left:860px;top:120.58px;font-size:10px;color:#1b1b1b;transform-origin:0 50%;transform:scaleX(0.9915);">Notation + Openings Book</span>
<svg class="r" style="left:1571px;top:124.5px;" width="9" height="6" viewBox="0 0 9 6"><path d="M0.500 0.500h8l-4 4.500z" fill="#111"/></svg>
<svg class="r" style="left:1585px;top:123.5px;" width="8" height="8" viewBox="0 0 8 8"><path d="M0.800 0.800l6.400 6.400M7.200 0.800l-6.400 6.400" stroke="#111" stroke-width="1.400"/></svg>
<div class="r" style="left:857px;top:155px;width:741px;height:1px;background:#dcdde4;"></div>
<div class="r" style="left:859px;top:138px;width:50px;height:18px;background:#fff;border:1px solid #d6d8e0;border-bottom:none;box-sizing:border-box;"></div>
<span id="t112" class="t" style="left:864px;top:139.59px;font-size:10px;color:#3b79b5;transform-origin:0 50%;transform:scaleX(1.0541);">Notation</span>
<span id="t113" class="t" style="left:913px;top:139.59px;font-size:10px;color:#1e1e1e;transform-origin:0 50%;transform:scaleX(0.9457);">Reference</span>
<span id="t114" class="t" style="left:966.5px;top:139.59px;font-size:10px;color:#1e1e1e;transform-origin:0 50%;transform:scaleX(0.9776);">Replay training</span>
<span id="t115" class="t" style="left:1042.5px;top:139.59px;font-size:10px;color:#1e1e1e;transform-origin:0 50%;transform:scaleX(0.9583);">Plan Explorer</span>
<span id="t116" class="t" style="left:1110.2px;top:139.59px;font-size:10px;color:#1e1e1e;transform-origin:0 50%;transform:scaleX(0.9167);">Table</span>
<span id="t117" class="t" style="left:1149.7px;top:139.59px;font-size:10px;color:#1e1e1e;transform-origin:0 50%;transform:scaleX(0.9434);">Score sheet</span>
<span id="t118" class="t" style="left:1209.6px;top:139.59px;font-size:10px;color:#1e1e1e;transform-origin:0 50%;transform:scaleX(0.9878);">LiveBook</span>
<span id="t119" class="t" style="left:1260px;top:139.59px;font-size:10px;color:#1e1e1e;transform-origin:0 50%;transform:scaleX(0.9853);">Openings Book</span>
<span id="t120" class="t" style="left:1337.3px;top:139.59px;font-size:10px;color:#1e1e1e;transform-origin:0 50%;transform:scaleX(1.0000);">My Moves</span>
<span id="t121" class="t" style="left:1393.5px;top:139.59px;font-size:10px;color:#1e1e1e;transform-origin:0 50%;transform:scaleX(0.9355);">Survey</span>
<span id="t122" class="t" style="left:1227.5px;top:160.72px;font-size:12.5px;color:#111;font-weight:bold;-webkit-text-stroke:0;transform-origin:50% 50%;transform:translateX(-50%) scaleX(1.0354);">Neue Partie eingeben</span>
<div class="r" style="left:857px;top:200.5px;width:741px;height:1.5px;background:#4a4aa8;"></div>
<span id="t123" class="t" style="left:860.4px;top:204.72px;font-size:12.5px;color:#111;font-weight:bold;-webkit-text-stroke:0;transform-origin:0 50%;transform:scaleX(0.9375);">1.e4</span>
<span id="t124" class="t" style="left:889.9px;top:204.72px;font-size:12.5px;color:#111;font-weight:bold;-webkit-text-stroke:0;transform-origin:0 50%;transform:scaleX(1.0333);">d6</span>
<span id="t125" class="t" style="left:912.4px;top:204.72px;font-size:12.5px;color:#111;font-weight:bold;-webkit-text-stroke:0;transform-origin:0 50%;transform:scaleX(1.0600);">2.d4</span>
<span id="t126" class="t" style="left:946.4px;top:204.72px;font-size:12.5px;color:#111;font-weight:bold;-webkit-text-stroke:0;transform-origin:0 50%;transform:scaleX(1.0500);">Nf6</span>
<span id="t127" class="t" style="left:975.4px;top:204.72px;font-size:12.5px;color:#111;font-weight:bold;-webkit-text-stroke:0;transform-origin:0 50%;transform:scaleX(1.0152);">3.Nc3</span>
<span id="t128" class="t" style="left:1016.9px;top:204.72px;font-size:12.5px;color:#111;font-weight:bold;-webkit-text-stroke:0;transform-origin:0 50%;transform:scaleX(1.0000);">g6</span>
<span id="t129" class="t" style="left:1039.4px;top:204.72px;font-size:12.5px;color:#111;font-weight:bold;-webkit-text-stroke:0;transform-origin:0 50%;transform:scaleX(1.0323);">4.Nf3</span>
<span id="t130" class="t" style="left:1079.4px;top:204.72px;font-size:12.5px;color:#111;font-weight:bold;-webkit-text-stroke:0;transform-origin:0 50%;transform:scaleX(0.9167);">Bg7</span>
<span id="t131" class="t" style="left:1110.2px;top:204.72px;font-size:12.5px;color:#111;font-weight:bold;-webkit-text-stroke:0;transform-origin:0 50%;transform:scaleX(1.0061);">5.Be2</span>
<span id="t132" class="t" style="left:1150.9px;top:204.72px;font-size:12.5px;color:#111;font-weight:bold;-webkit-text-stroke:0;transform-origin:0 50%;transform:scaleX(1.1111);">0-0</span>
<span id="t133" class="t" style="left:1177.9px;top:204.72px;font-size:12.5px;color:#111;font-weight:bold;-webkit-text-stroke:0;transform-origin:0 50%;transform:scaleX(1.0172);">6.0-0</span>
<span id="t134" class="t" style="left:1215.1px;top:204.72px;font-size:12.5px;color:#111;font-weight:bold;-webkit-text-stroke:0;transform-origin:0 50%;transform:scaleX(0.9786);">c6</span>
<span id="t135" class="t" style="left:1235.9px;top:204.72px;font-size:12.5px;color:#111;font-weight:bold;-webkit-text-stroke:0;transform-origin:0 50%;transform:scaleX(1.0208);">7.a4</span>
<span id="t136" class="t" style="left:1267.4px;top:204.72px;font-size:12.5px;color:#111;font-weight:bold;-webkit-text-stroke:0;transform-origin:0 50%;transform:scaleX(1.0000);">a5</span>
<span id="t137" class="t" style="left:1288.6px;top:204.72px;font-size:12.5px;color:#111;font-weight:bold;-webkit-text-stroke:0;transform-origin:0 50%;transform:scaleX(0.9920);">8.h3</span>
<span id="t138" class="t" style="left:874.6px;top:224.72px;font-size:12.5px;color:#111;transform-origin:0 50%;transform:scaleX(0.9500);">[</span>
<svg class="r" style="left:881px;top:226px;" width="13.5" height="12.5" viewBox="0 0 13.5 12.5"><rect x="0.300" y="0.300" width="12.900" height="11.900" rx="2.200" fill="#a9c04e" stroke="#c3d486" stroke-width="0.600"/><rect x="1.200" y="6.500" width="11" height="4.800" rx="1.500" fill="#9ab53d"/><rect x="3.300" y="5.300" width="6.800" height="1.900" fill="#1f2a10"/></svg>
<span id="t139" class="t" style="left:901.1px;top:224.72px;font-size:12.5px;color:#111;transform-origin:0 50%;transform:scaleX(0.9394);">8.Be3</span>
<span id="t140" class="t" style="left:940px;top:224.72px;font-size:12.5px;color:#111;transform-origin:0 50%;transform:scaleX(0.9739);">Na6</span>
<span id="t141" class="t" style="left:970px;top:224.72px;font-size:12.5px;color:#111;transform-origin:0 50%;transform:scaleX(1.0000);">9.h3</span>
<span id="t142" class="t" style="left:1002.4px;top:224.72px;font-size:12.5px;color:#111;transform-origin:0 50%;transform:scaleX(1.0174);">Nb4</span>
<span id="t143" class="t" style="left:1034.9px;top:224.72px;font-size:12.5px;color:#111;transform-origin:0 50%;transform:scaleX(0.9805);">10.Qd2</span>
<span id="t144" class="t" style="left:1080.4px;top:224.72px;font-size:12.5px;color:#111;transform-origin:0 50%;transform:scaleX(0.9500);">]</span>
<div class="r" style="left:901.5px;top:240.3px;width:31.5px;height:1px;background:#222;"></div>
<span id="t145" class="t" style="left:874.6px;top:245.72px;font-size:12.5px;color:#111;transform-origin:0 50%;transform:scaleX(0.9500);">[</span>
<svg class="r" style="left:881px;top:246.8px;" width="13.5" height="12.5" viewBox="0 0 13.5 12.5"><rect x="0.300" y="0.300" width="12.900" height="11.900" rx="2.200" fill="#a9c04e" stroke="#c3d486" stroke-width="0.600"/><rect x="1.200" y="6.500" width="11" height="4.800" rx="1.500" fill="#9ab53d"/><rect x="3.300" y="5.300" width="6.800" height="1.900" fill="#1f2a10"/></svg>
<span id="t146" class="t" style="left:901.1px;top:245.72px;font-size:12.5px;color:#111;transform-origin:0 50%;transform:scaleX(0.9759);">8.Bf4</span>
<span id="t147" class="t" style="left:937.3px;top:245.72px;font-size:12.5px;color:#111;transform-origin:0 50%;transform:scaleX(0.9783);">Na6</span>
<span id="t148" class="t" style="left:968px;top:245.72px;font-size:12.5px;color:#111;transform-origin:0 50%;transform:scaleX(0.9750);">9.h3</span>
<span id="t149" class="t" style="left:1000px;top:245.72px;font-size:12.5px;color:#111;transform-origin:0 50%;transform:scaleX(1.0043);">Nb4</span>
<span id="t150" class="t" style="left:1032.3px;top:245.72px;font-size:12.5px;color:#111;transform-origin:0 50%;transform:scaleX(0.9780);">10.Qd2</span>
<span id="t151" class="t" style="left:1077.7px;top:245.72px;font-size:12.5px;color:#111;transform-origin:0 50%;transform:scaleX(0.9500);">]</span>
<div class="r" style="left:901.5px;top:261.1px;width:28.8px;height:1px;background:#222;"></div>
<span id="t152" class="t" style="left:874.6px;top:265.72px;font-size:12.5px;color:#111;transform-origin:0 50%;transform:scaleX(0.9500);">[</span>
<svg class="r" style="left:881px;top:267.5px;" width="13.5" height="12.5" viewBox="0 0 13.5 12.5"><rect x="0.300" y="0.300" width="12.900" height="11.900" rx="2.200" fill="#a9c04e" stroke="#c3d486" stroke-width="0.600"/><rect x="1.200" y="6.500" width="11" height="4.800" rx="1.500" fill="#9ab53d"/><rect x="3.300" y="5.300" width="6.800" height="1.900" fill="#1f2a10"/></svg>
<span id="t153" class="t" style="left:901.1px;top:265.72px;font-size:12.5px;color:#111;transform-origin:0 50%;transform:scaleX(0.9545);">8.Re1</span>
<span id="t154" class="t" style="left:940.8px;top:265.72px;font-size:12.5px;color:#111;transform-origin:0 50%;transform:scaleX(0.9826);">Na6</span>
<span id="t155" class="t" style="left:971.1px;top:265.72px;font-size:12.5px;color:#111;transform-origin:0 50%;transform:scaleX(0.9792);">9.h3</span>
<span id="t156" class="t" style="left:1003.1px;top:265.72px;font-size:12.5px;color:#111;transform-origin:0 50%;transform:scaleX(1.0217);">Nb4</span>
<span id="t157" class="t" style="left:1035.4px;top:265.72px;font-size:12.5px;color:#111;transform-origin:0 50%;transform:scaleX(0.9722);">10.Bf4</span>
<span id="t158" class="t" style="left:1075.2px;top:265.72px;font-size:12.5px;color:#111;transform-origin:0 50%;transform:scaleX(0.9500);">]</span>
<div class="r" style="left:901.5px;top:281.8px;width:32px;height:1px;background:#222;"></div>
<span id="t159" class="t" style="left:860.4px;top:287.72px;font-size:12.5px;color:#111;font-weight:bold;-webkit-text-stroke:0;transform-origin:0 50%;transform:scaleX(1.0175);">8...Na6</span>
<span id="t160" class="t" style="left:908.6px;top:287.72px;font-size:12.5px;color:#111;font-weight:bold;-webkit-text-stroke:0;transform-origin:0 50%;transform:scaleX(1.0030);">9.Be3</span>
<div class="r" style="left:898.5px;top:310px;width:34.5px;height:14.5px;background:#dbe8f8;"></div>
<span id="t161" class="t" style="left:874.9px;top:307.72px;font-size:12.5px;color:#111;transform-origin:0 50%;transform:scaleX(0.9500);">[</span>
<svg class="r" style="left:881px;top:310px;" width="13.5" height="12.5" viewBox="0 0 13.5 12.5"><rect x="0.300" y="0.300" width="12.900" height="11.900" rx="2.200" fill="#a9c04e" stroke="#c3d486" stroke-width="0.600"/><rect x="1.200" y="6.500" width="11" height="4.800" rx="1.500" fill="#9ab53d"/><rect x="3.300" y="5.300" width="6.800" height="1.900" fill="#1f2a10"/></svg>
<span id="t162" class="t" style="left:901.3px;top:308.72px;font-size:12.5px;color:#111;transform-origin:0 50%;transform:scaleX(0.9690);">9.Bf4</span>
<span id="t163" class="t" style="left:937.3px;top:308.72px;font-size:12.5px;color:#111;transform-origin:0 50%;transform:scaleX(1.0261);">Nb4</span>
<span id="t164" class="t" style="left:970px;top:308.72px;font-size:12.5px;color:#111;transform-origin:0 50%;transform:scaleX(0.9829);">10.Qd2</span>
<span id="t165" class="t" style="left:1018.2px;top:308.72px;font-size:12.5px;color:#111;transform-origin:0 50%;transform:scaleX(0.9833);">Qb6</span>
<span id="t166" class="t" style="left:1046.8px;top:307.72px;font-size:12.5px;color:#111;transform-origin:0 50%;transform:scaleX(0.9500);">]</span>
<div class="r" style="left:901.5px;top:322.8px;width:28.8px;height:1px;background:#1c3f7a;"></div>
<div class="r" style="left:898.5px;top:326px;width:37.7px;height:21px;background:#dbe8f8;"></div>
<div class="r" style="left:936.2px;top:326px;width:154.3px;height:21px;background:#ffffdc;"></div>
<div class="r" style="left:1090.5px;top:326.5px;width:28.5px;height:20.8px;background:#0a0a32;"></div>
<span id="t167" class="t" style="left:874.9px;top:328.72px;font-size:12.5px;color:#111;transform-origin:0 50%;transform:scaleX(0.9500);">[</span>
<svg class="r" style="left:881px;top:330.5px;" width="13.5" height="12.5" viewBox="0 0 13.5 12.5"><rect x="0.300" y="0.300" width="12.900" height="11.900" rx="2.200" fill="#a9c04e" stroke="#c3d486" stroke-width="0.600"/><rect x="1.200" y="6.500" width="11" height="4.800" rx="1.500" fill="#9ab53d"/><rect x="3.300" y="5.300" width="6.800" height="1.900" fill="#1f2a10"/></svg>
<span id="t168" class="t" style="left:901.3px;top:328.72px;font-size:12.5px;color:#111;transform-origin:0 50%;transform:scaleX(0.9424);">9.Re1</span>
<span id="t169" class="t" style="left:940.6px;top:328.72px;font-size:12.5px;color:#111;transform-origin:0 50%;transform:scaleX(1.0304);">Nb4</span>
<span id="t170" class="t" style="left:973px;top:328.72px;font-size:12.5px;color:#111;transform-origin:0 50%;transform:scaleX(0.9556);">10.Bf4</span>
<span id="t171" class="t" style="left:1015.5px;top:328.72px;font-size:12.5px;color:#111;transform-origin:0 50%;transform:scaleX(1.0304);">Nh5</span>
<span id="t172" class="t" style="left:1047.9px;top:328.72px;font-size:12.5px;color:#111;transform-origin:0 50%;transform:scaleX(0.9641);">11.Bh2</span>
<span id="t173" class="t" style="left:1094.5px;top:328.72px;font-size:12.5px;color:#fff;transform-origin:0 50%;transform:scaleX(0.9545);">Bh6</span>
<span id="t174" class="t" style="left:1120.3px;top:328.72px;font-size:12.5px;color:#111;transform-origin:0 50%;transform:scaleX(0.9500);">]</span>
<div class="r" style="left:901.5px;top:343.4px;width:31.8px;height:1px;background:#1c3f7a;"></div>
<span id="t175" class="t" style="left:860.1px;top:350.72px;font-size:12.5px;color:#111;font-weight:bold;-webkit-text-stroke:0;transform-origin:0 50%;transform:scaleX(1.0390);">9...Nb4</span>
<span id="t176" class="t" style="left:910px;top:350.72px;font-size:12.5px;color:#111;font-weight:bold;-webkit-text-stroke:0;transform-origin:0 50%;transform:scaleX(0.9714);">10.Qd2</span>
<span id="t177" class="t" style="left:958.7px;top:350.72px;font-size:12.5px;color:#111;font-weight:bold;-webkit-text-stroke:0;transform-origin:0 50%;transform:scaleX(0.9333);">Qc7</span>
<span id="t178" class="t" style="left:989.3px;top:350.72px;font-size:12.5px;color:#111;font-weight:bold;-webkit-text-stroke:0;transform-origin:0 50%;transform:scaleX(0.8975);">11.Bh6</span>
<span id="t179" class="t" style="left:1033.4px;top:350.72px;font-size:12.5px;color:#111;font-weight:bold;-webkit-text-stroke:0;transform-origin:0 50%;transform:scaleX(0.8750);">Bd7</span>
<span id="t180" class="t" style="left:1063.3px;top:350.72px;font-size:12.5px;color:#111;font-weight:bold;-webkit-text-stroke:0;transform-origin:0 50%;transform:scaleX(0.8936);">12.Rac1</span>
<svg class="r" style="left:1565px;top:206px;" width="7" height="5" viewBox="0 0 7 5"><path d="M0 4.500h7l-3.500-4z" fill="#777"/></svg>
<div class="r" style="left:1565.2px;top:216px;width:6.3px;height:13.6px;background:#cdcddb;"></div>
<svg class="r" style="left:1565px;top:526px;" width="7" height="5" viewBox="0 0 7 5"><path d="M0 0.500h7l-3.500 4z" fill="#777"/></svg>
<div class="r" style="left:1575px;top:201px;width:1.9px;height:355px;background:#111;"></div>
<div class="r" style="left:857px;top:534.8px;width:719px;height:2px;background:#111;"></div>
<div class="r" style="left:857px;top:555.5px;width:740.5px;height:2px;background:#111;"></div>
<svg class="r" style="left:1580px;top:205.5px;" width="14" height="14" viewBox="0 0 14 14"><path d="M1.500 6.500H12.500M7 1.500V11.500" fill="none" stroke="#222" stroke-width="1.700"/><path d="M4 4L1.300 6.500L4 9M10 4L12.700 6.500L10 9M4.700 3.700L7 1.300L9.300 3.700" fill="none" stroke="#222" stroke-width="1.600" stroke-linejoin="round"/><rect x="6" y="10.600" width="4" height="2.400" fill="#d8281e"/><rect x="10" y="10.600" width="3.500" height="2.400" fill="#2ea82e"/></svg>
<svg class="r" style="left:1580px;top:223.5px;" width="14" height="14" viewBox="0 0 14 14"><g fill="#2a2a2a"><path d="M7 7L6.500 1.500L2.500 4.500z"/><path d="M7 7L12.500 6.500L9.500 2.500z"/><path d="M7 7L7.500 12.500L11.500 9.500z"/><path d="M7 7L1.500 7.500L4.500 11.500z"/></g><path d="M6.500 1.500q3-1 5 1M12.500 6.500q1 3-1 5M7.500 12.500q-3 1-5-1M1.500 7.500q-1-3 1-5" fill="none" stroke="#2a2a2a" stroke-width="1"/></svg>
<svg class="r" style="left:1580px;top:242.5px;" width="14" height="14" viewBox="0 0 14 14"><path d="M1.500 6.500H12.500M7 1.500V11.500" fill="none" stroke="#222" stroke-width="1.700"/><path d="M4 4L1.300 6.500L4 9M10 4L12.700 6.500L10 9M4.700 3.700L7 1.300L9.300 3.700" fill="none" stroke="#222" stroke-width="1.600" stroke-linejoin="round"/></svg>
<svg class="r" style="left:1580px;top:261px;" width="14" height="15" viewBox="0 0 14 15"><path d="M6 4.500v2.500a3.800 3.800 0 1 0 5.500 1" fill="none" stroke="#444" stroke-width="2"/><path d="M6 0.500l-3 4h6z" fill="#444"/></svg>
<span id="t181" class="t" style="left:1580px;top:278.72px;font-size:12.5px;color:#111;font-weight:bold;-webkit-text-stroke:0;transform-origin:0 50%;transform:scaleX(0.9444);-webkit-text-stroke:0.300px #111;">A</span>
<span id="t182" class="t" style="left:1588.3px;top:279.41px;font-size:10.5px;color:#111;font-weight:bold;-webkit-text-stroke:0;transform-origin:0 50%;transform:scaleX(0.9167);-webkit-text-stroke:0.300px #111;">a</span>
<svg class="r" style="left:1580px;top:297.5px;" width="14" height="15" viewBox="0 0 14 15"><circle cx="3.300" cy="3" r="2.200" fill="#fff" stroke="#222" stroke-width="1.100"/><rect x="6.500" y="4.800" width="6.500" height="3.800" rx="1.900" fill="#fff" stroke="#222" stroke-width="1.100"/><rect x="4.500" y="10" width="7" height="3.800" rx="1.900" fill="#fff" stroke="#222" stroke-width="1.100"/><path d="M3.300 5.200v6.700h1.200M3.300 6.700h3.200" fill="none" stroke="#222" stroke-width="1"/></svg>
<svg class="r" style="left:1580px;top:316px;" width="14" height="15" viewBox="0 0 14 15"><path d="M1.500 9.500l8-8.500l3 1.500l-6 9z" fill="#6a6a6e"/><path d="M3 10.500l7-7.500l2 1l-6 8z" fill="#a0a0a6"/><path d="M1 10l5 2l-1 1.500l-4.500-1z" fill="#444"/><rect x="5.500" y="11.800" width="4" height="2.600" fill="#d8281e"/><rect x="9.500" y="11.800" width="4" height="2.600" fill="#2ea82e"/></svg>
<svg class="r" style="left:1580px;top:334.5px;" width="14" height="14" viewBox="0 0 14 14"><rect width="14" height="14" fill="#a07848"/><rect x="0" y="0" width="7" height="7" fill="#d6b78c"/><rect x="7" y="7" width="7" height="7" fill="#d6b78c"/><path d="M3.500 1.500a1.400 1.400 0 0 1 0 2.800l1.300 2.200h-2.600l1.300-2.200a1.400 1.400 0 0 1 0-2.800zM10.500 1.500a1.400 1.400 0 0 1 0 2.800l1.300 2.200h-2.600l1.300-2.200a1.400 1.400 0 0 1 0-2.800z" fill="#3a2414"/><path d="M3.500 8a1.400 1.400 0 0 1 0 2.800l1.500 2.700h-3l1.500-2.700a1.400 1.400 0 0 1 0-2.800zM10.500 8a1.400 1.400 0 0 1 0 2.800l1.500 2.700h-3l1.500-2.700a1.400 1.400 0 0 1 0-2.800z" fill="#2a1a10"/></svg>
<svg class="r" style="left:1580px;top:353px;" width="14" height="14" viewBox="0 0 14 14"><path d="M1 8.500l7.500-5.500a2 2 0 0 1 2.500 0l2 1.800a1.500 1.500 0 0 1 0 2.200l-7.500 5a2 2 0 0 1-2.500 0l-2-1.500a1.300 1.300 0 0 1 0-2z" fill="#a9bdea" stroke="#6a7ec0" stroke-width="0.700"/><path d="M1 8.500l3-2.200l4.500 3.700l-2.500 2a2 2 0 0 1-2.500 0l-2-1.500a1.300 1.300 0 0 1-0.500-2z" fill="#e88a98"/></svg>
<div class="r" style="left:1580.5px;top:371.5px;width:13px;height:12.2px;background:#e8202a;"></div>
<div class="r" style="left:865.25px;top:566px;width:1px;height:41.5px;background:#666;"></div>
<span id="t183" class="t" style="left:860px;top:558.80px;font-size:6.5px;color:#999;transform-origin:0 50%;transform:scaleX(0.9500);">1</span>
<span id="t184" class="t" style="left:858.5px;top:599.80px;font-size:6.5px;color:#999;transform-origin:0 50%;transform:scaleX(0.9500);">-1</span>
<div class="r" style="left:865.75px;top:585.95px;width:17.6px;height:1.6px;background:linear-gradient(#2a8a2a,#176a17);"></div>
<div class="r" style="left:883.25px;top:585.25px;width:17.6px;height:2.3px;background:linear-gradient(#2a8a2a,#176a17);"></div>
<div class="r" style="left:900.75px;top:578.25px;width:17.6px;height:9.3px;background:linear-gradient(#2a8a2a,#176a17);"></div>
<div class="r" style="left:935.75px;top:578.25px;width:17.6px;height:9.3px;background:linear-gradient(#2a8a2a,#176a17);"></div>
<div class="r" style="left:953.25px;top:580.75px;width:17.6px;height:6.8px;background:linear-gradient(#2a8a2a,#176a17);"></div>
<div class="r" style="left:970.75px;top:585.95px;width:17.6px;height:1.6px;background:linear-gradient(#2a8a2a,#176a17);"></div>
<div class="r" style="left:988.25px;top:581.75px;width:17.6px;height:5.8px;background:linear-gradient(#2a8a2a,#176a17);"></div>
<div class="r" style="left:1005.75px;top:579.25px;width:17.6px;height:8.3px;background:linear-gradient(#2a8a2a,#176a17);"></div>
<div class="r" style="left:1023.25px;top:580.75px;width:17.6px;height:6.8px;background:linear-gradient(#2a8a2a,#176a17);"></div>
<div class="r" style="left:1040.75px;top:579.25px;width:17.6px;height:8.3px;background:linear-gradient(#2a8a2a,#176a17);"></div>
<div class="r" style="left:1058.25px;top:578.25px;width:17.6px;height:9.3px;background:linear-gradient(#2a8a2a,#176a17);"></div>
<div class="r" style="left:1075.75px;top:578.25px;width:17.6px;height:9.3px;background:linear-gradient(#2a8a2a,#176a17);"></div>
<div class="r" style="left:1093.25px;top:578.25px;width:17.6px;height:9.3px;background:linear-gradient(#2a8a2a,#176a17);"></div>
<div class="r" style="left:1110.75px;top:578.25px;width:17.6px;height:9.3px;background:linear-gradient(#2a8a2a,#176a17);"></div>
<div class="r" style="left:1128.25px;top:576.25px;width:17.6px;height:11.3px;background:linear-gradient(#2a8a2a,#176a17);"></div>
<div class="r" style="left:1145.75px;top:578.25px;width:17.6px;height:9.3px;background:linear-gradient(#2a8a2a,#176a17);"></div>
<div class="r" style="left:1163.25px;top:576.75px;width:17.6px;height:10.8px;background:linear-gradient(#2a8a2a,#176a17);"></div>
<div class="r" style="left:1180.75px;top:575.75px;width:17.6px;height:11.8px;background:linear-gradient(#2a8a2a,#176a17);"></div>
<div class="r" style="left:1198.25px;top:573.75px;width:17.6px;height:13.8px;background:linear-gradient(#2a8a2a,#176a17);"></div>
<div class="r" style="left:1215.75px;top:578.75px;width:17.6px;height:8.8px;background:linear-gradient(#2a8a2a,#176a17);"></div>
<div class="r" style="left:1233.25px;top:577.75px;width:17.6px;height:9.8px;background:linear-gradient(#2a8a2a,#176a17);"></div>
<div class="r" style="left:1250.75px;top:576.75px;width:17.6px;height:10.8px;background:linear-gradient(#2a8a2a,#176a17);"></div>
<div class="r" style="left:1268.25px;top:572.25px;width:17.6px;height:15.3px;background:linear-gradient(#2a8a2a,#176a17);"></div>
<div class="r" style="left:1285.75px;top:572.25px;width:17.6px;height:15.3px;background:linear-gradient(#2a8a2a,#176a17);"></div>
<div class="r" style="left:1303.25px;top:583.25px;width:17.6px;height:4.3px;background:linear-gradient(#2a8a2a,#176a17);"></div>
<div class="r" style="left:1320.75px;top:573.25px;width:17.6px;height:14.3px;background:linear-gradient(#2a8a2a,#176a17);"></div>
<div class="r" style="left:1338.25px;top:573.25px;width:17.6px;height:14.3px;background:linear-gradient(#2a8a2a,#176a17);"></div>
<div class="r" style="left:1355.75px;top:568.75px;width:17.6px;height:18.8px;background:linear-gradient(#2a8a2a,#176a17);"></div>
<div class="r" style="left:1373.25px;top:585.95px;width:17.6px;height:1.6px;background:linear-gradient(#2a8a2a,#176a17);"></div>
<div class="r" style="left:1390.75px;top:581.75px;width:17.6px;height:5.8px;background:linear-gradient(#2a8a2a,#176a17);"></div>
<div class="r" style="left:1408.25px;top:582.25px;width:17.6px;height:5.3px;background:linear-gradient(#2a8a2a,#176a17);"></div>
<div class="r" style="left:1425.75px;top:576.75px;width:17.6px;height:10.8px;background:linear-gradient(#2a8a2a,#176a17);"></div>
<div class="r" style="left:1443.25px;top:575.75px;width:17.6px;height:11.8px;background:linear-gradient(#2a8a2a,#176a17);"></div>
<div class="r" style="left:1460.75px;top:579.75px;width:17.6px;height:7.8px;background:linear-gradient(#2a8a2a,#176a17);"></div>
<div class="r" style="left:1478.25px;top:579.75px;width:17.6px;height:7.8px;background:linear-gradient(#2a8a2a,#176a17);"></div>
<div class="r" style="left:1495.75px;top:581.25px;width:17.6px;height:6.3px;background:linear-gradient(#2a8a2a,#176a17);"></div>
<div class="r" style="left:1513.25px;top:585.95px;width:17.6px;height:1.6px;background:linear-gradient(#2a8a2a,#176a17);"></div>
<div class="r" style="left:865.75px;top:587.25px;width:667px;height:1px;background:#2a3a2a;"></div>
<div class="r" style="left:918.25px;top:587.45px;width:17.6px;height:1px;background:#b22;"></div>
<div class="r" style="left:1532.75px;top:587.05px;width:51px;height:1.2px;background:#888;"></div>
<div class="r" style="left:916.75px;top:587.75px;width:1px;height:2px;background:#222;"></div>
<span id="t185" class="t" style="left:917.25px;top:602.80px;font-size:6.5px;color:#999;transform-origin:50% 50%;transform:translateX(-50%) scaleX(0.9500);">2</span>
<div class="r" style="left:986.75px;top:587.75px;width:1px;height:2px;background:#222;"></div>
<span id="t186" class="t" style="left:987.25px;top:602.80px;font-size:6.5px;color:#999;transform-origin:50% 50%;transform:translateX(-50%) scaleX(0.9500);">4</span>
<div class="r" style="left:1056.75px;top:587.75px;width:1px;height:2px;background:#222;"></div>
<span id="t187" class="t" style="left:1057.25px;top:602.80px;font-size:6.5px;color:#999;transform-origin:50% 50%;transform:translateX(-50%) scaleX(0.9500);">6</span>
<div class="r" style="left:1126.75px;top:587.75px;width:1px;height:2px;background:#222;"></div>
<span id="t188" class="t" style="left:1127.25px;top:602.80px;font-size:6.5px;color:#999;transform-origin:50% 50%;transform:translateX(-50%) scaleX(0.9500);">8</span>
<div class="r" style="left:1196.75px;top:587.75px;width:1px;height:2px;background:#222;"></div>
<span id="t189" class="t" style="left:1197.25px;top:602.80px;font-size:6.5px;color:#999;transform-origin:50% 50%;transform:translateX(-50%) scaleX(0.9500);">10</span>
<div class="r" style="left:1266.75px;top:587.75px;width:1px;height:2px;background:#222;"></div>
<span id="t190" class="t" style="left:1267.25px;top:602.80px;font-size:6.5px;color:#999;transform-origin:50% 50%;transform:translateX(-50%) scaleX(0.9500);">12</span>
<div class="r" style="left:1336.75px;top:587.75px;width:1px;height:2px;background:#222;"></div>
<span id="t191" class="t" style="left:1337.25px;top:602.80px;font-size:6.5px;color:#999;transform-origin:50% 50%;transform:translateX(-50%) scaleX(0.9500);">14</span>
<div class="r" style="left:1406.75px;top:587.75px;width:1px;height:2px;background:#222;"></div>
<span id="t192" class="t" style="left:1407.25px;top:602.80px;font-size:6.5px;color:#999;transform-origin:50% 50%;transform:translateX(-50%) scaleX(0.9500);">16</span>
<div class="r" style="left:1476.75px;top:587.75px;width:1px;height:2px;background:#222;"></div>
<span id="t193" class="t" style="left:1477.25px;top:602.80px;font-size:6.5px;color:#999;transform-origin:50% 50%;transform:translateX(-50%) scaleX(0.9500);">18</span>
<svg class="r" style="left:1248px;top:558px;" width="7" height="5" viewBox="0 0 7 5"><path d="M0.500 0.500h6l-3 4z" fill="#3030b0"/></svg>
<div class="r" style="left:1588px;top:566px;width:5.5px;height:42px;background:#fdf7dc;border:1px solid #555;box-sizing:border-box;"></div>
<div class="r" style="left:1588px;top:574.5px;width:5.5px;height:1px;background:#777;"></div>
<div class="r" style="left:1588px;top:582.8px;width:5.5px;height:1px;background:#777;"></div>
<div class="r" style="left:1588px;top:591px;width:5.5px;height:1px;background:#777;"></div>
<div class="r" style="left:1588px;top:599px;width:5.5px;height:1px;background:#777;"></div>
<div class="r" style="left:1589px;top:600px;width:3.5px;height:7px;background:#5fd7ea;"></div>
<div class="r" style="left:866px;top:616px;width:732px;height:1px;background:#d0d0d6;"></div>
<div class="r" style="left:861px;top:619px;width:1px;height:1px;background:#b8b8c0;"></div>
<div class="r" style="left:861px;top:621px;width:1px;height:1px;background:#b8b8c0;"></div>
<div class="r" style="left:861px;top:623px;width:1px;height:1px;background:#b8b8c0;"></div>
<div class="r" style="left:861px;top:625px;width:1px;height:1px;background:#b8b8c0;"></div>
<div class="r" style="left:861px;top:627px;width:1px;height:1px;background:#b8b8c0;"></div>
<div class="r" style="left:861px;top:629px;width:1px;height:1px;background:#b8b8c0;"></div>
<div class="r" style="left:861px;top:631px;width:1px;height:1px;background:#b8b8c0;"></div>
<div class="r" style="left:861px;top:633px;width:1px;height:1px;background:#b8b8c0;"></div>
<svg class="r" style="left:870.5px;top:620.75px;" width="8" height="12" viewBox="0 0 8 12"><path d="M4 1.500v10" fill="none" stroke="#1a7a1a" stroke-width="1.800"/><path d="M4 0l-3.500 4.500h7z" fill="#1a7a1a"/></svg>
<svg class="r" style="left:891px;top:620.25px;" width="12" height="13" viewBox="0 0 12 13"><path d="M1 1l10 11M11 1l-10 11M1.500 1v11" fill="none" stroke="#c22" stroke-width="1.400"/></svg>
<span id="t194" class="t" style="left:919.5px;top:618.72px;font-size:12.5px;color:#111;font-weight:bold;-webkit-text-stroke:0;transform-origin:50% 50%;transform:translateX(-50%) scaleX(0.9500);">]</span>
<span class="pc" style="left:934px;top:618.25px;width:16px;font-size:11px;line-height:17px;color:#111">♟</span>
<span class="pc" style="left:956.5px;top:618.25px;width:16px;font-size:11px;line-height:17px;color:#c8202a">♟</span>
<svg class="r" style="left:980.5px;top:620.25px;" width="13" height="13" viewBox="0 0 13 13"><rect width="13" height="13" fill="#b08a5a"/><rect x="0" y="0" width="6.500" height="6.500" fill="#d8bb8a"/><rect x="6.500" y="6.500" width="6.500" height="6.500" fill="#d8bb8a"/><circle cx="3.500" cy="4" r="1.800" fill="#3a2a1a"/><rect x="2.200" y="5" width="2.600" height="6.500" fill="#3a2a1a"/><circle cx="9.800" cy="4" r="1.800" fill="#5a3a2a"/><rect x="8.500" y="5" width="2.600" height="6.500" fill="#5a3a2a"/></svg>
<span id="t195" class="t" style="left:1009.5px;top:618.55px;font-size:13px;color:#2a2a2a;font-family:'Liberation Sans','DejaVu Sans',sans-serif;transform-origin:50% 50%;transform:translateX(-50%) scaleX(0.9500);">!!</span>
<span id="t196" class="t" style="left:1032px;top:618.55px;font-size:13px;color:#2a2a2a;font-family:'Liberation Sans','DejaVu Sans',sans-serif;transform-origin:50% 50%;transform:translateX(-50%) scaleX(0.9500);">!</span>
<span id="t197" class="t" style="left:1054.5px;top:618.55px;font-size:13px;color:#2a2a2a;font-family:'Liberation Sans','DejaVu Sans',sans-serif;transform-origin:50% 50%;transform:translateX(-50%) scaleX(0.9500);">!?</span>
<span id="t198" class="t" style="left:1077px;top:618.55px;font-size:13px;color:#2a2a2a;font-family:'Liberation Sans','DejaVu Sans',sans-serif;transform-origin:50% 50%;transform:translateX(-50%) scaleX(0.9500);">?!</span>
<span id="t199" class="t" style="left:1099.5px;top:618.55px;font-size:13px;color:#2a2a2a;font-family:'Liberation Sans','DejaVu Sans',sans-serif;transform-origin:50% 50%;transform:translateX(-50%) scaleX(0.9500);">?</span>
<span id="t200" class="t" style="left:1122px;top:618.55px;font-size:13px;color:#2a2a2a;font-family:'Liberation Sans','DejaVu Sans',sans-serif;transform-origin:50% 50%;transform:translateX(-50%) scaleX(0.9500);">??</span>
<span id="t201" class="t" style="left:1144.5px;top:618.55px;font-size:13px;color:#2a2a2a;font-family:'Liberation Sans','DejaVu Sans',sans-serif;transform-origin:50% 50%;transform:translateX(-50%) scaleX(0.9500);">+−</span>
<span id="t202" class="t" style="left:1167px;top:618.55px;font-size:13px;color:#2a2a2a;font-family:'Liberation Sans','DejaVu Sans',sans-serif;transform-origin:50% 50%;transform:translateX(-50%) scaleX(0.9500);">±</span>
<span id="t203" class="t" style="left:1189.5px;top:618.55px;font-size:13px;color:#2a2a2a;font-family:'Liberation Sans','DejaVu Sans',sans-serif;transform-origin:50% 50%;transform:translateX(-50%) scaleX(0.9500);">⩲</span>
<span id="t204" class="t" style="left:1212px;top:618.55px;font-size:13px;color:#2a2a2a;font-family:'Liberation Sans','DejaVu Sans',sans-serif;transform-origin:50% 50%;transform:translateX(-50%) scaleX(0.9500);">=</span>
<span id="t205" class="t" style="left:1234.5px;top:618.55px;font-size:13px;color:#2a2a2a;font-family:'Liberation Sans','DejaVu Sans',sans-serif;transform-origin:50% 50%;transform:translateX(-50%) scaleX(0.9500);">∞</span>
<span id="t206" class="t" style="left:1279.5px;top:618.55px;font-size:13px;color:#2a2a2a;font-family:'Liberation Sans','DejaVu Sans',sans-serif;transform-origin:50% 50%;transform:translateX(-50%) scaleX(0.9500);">⩱</span>
<span id="t207" class="t" style="left:1302px;top:618.55px;font-size:13px;color:#2a2a2a;font-family:'Liberation Sans','DejaVu Sans',sans-serif;transform-origin:50% 50%;transform:translateX(-50%) scaleX(0.9500);">∓</span>
<span id="t208" class="t" style="left:1324.5px;top:618.55px;font-size:13px;color:#2a2a2a;font-family:'Liberation Sans','DejaVu Sans',sans-serif;transform-origin:50% 50%;transform:translateX(-50%) scaleX(0.9500);">−+</span>
<span id="t209" class="t" style="left:1347px;top:618.55px;font-size:13px;color:#2a2a2a;font-family:'Liberation Sans','DejaVu Sans',sans-serif;transform-origin:50% 50%;transform:translateX(-50%) scaleX(0.9500);">⇄</span>
<span id="t210" class="t" style="left:1257px;top:615.24px;font-size:11px;color:#2a2a2a;font-family:'Liberation Sans','DejaVu Sans',sans-serif;transform-origin:50% 50%;transform:translateX(-50%) scaleX(0.9500);">∞</span>
<span id="t211" class="t" style="left:1257px;top:621.89px;font-size:12px;color:#2a2a2a;font-family:'Liberation Sans','DejaVu Sans',sans-serif;transform-origin:50% 50%;transform:translateX(-50%) scaleX(0.9500);">=</span>
<svg class="r" style="left:1362.5px;top:619.75px;" width="14" height="14" viewBox="0 0 14 14"><path d="M1 8.500l7.500-5.500a2 2 0 0 1 2.500 0l2 1.800a1.500 1.500 0 0 1 0 2.200l-7.500 5a2 2 0 0 1-2.500 0l-2-1.500a1.300 1.300 0 0 1 0-2z" fill="#a9bdea" stroke="#6a7ec0" stroke-width="0.700"/><path d="M1 8.500l3-2.200l4.500 3.700l-2.500 2a2 2 0 0 1-2.500 0l-2-1.500a1.300 1.300 0 0 1-0.500-2z" fill="#e0606e"/></svg>
<svg class="r" style="left:1385px;top:619.25px;" width="14" height="14" viewBox="0 0 14 14"><path d="M7 0.800l1.900 4.100l4.400 0.500l-3.300 3l0.900 4.400l-3.900-2.300l-3.900 2.300l0.900-4.400l-3.300-3l4.400-0.500z" fill="#f6f6f6" stroke="#9c9c9c" stroke-width="0.900" stroke-linejoin="round"/></svg>
<svg class="r" style="left:1407.5px;top:619.25px;" width="15" height="15" viewBox="0 0 15 15"><path d="M7 0.800l1.900 4.100l4.400 0.500l-3.300 3l0.900 4.400l-3.900-2.300l-3.900 2.300l0.900-4.400l-3.300-3l4.400-0.500z" fill="#f6f6f6" stroke="#9c9c9c" stroke-width="0.900" stroke-linejoin="round"/><path d="M9.500 11.500h4.500M11.800 9.300v4.500" stroke="#777" stroke-width="1.300"/></svg>
<svg class="r" style="left:1430.5px;top:620.75px;" width="13" height="12" viewBox="0 0 13 12"><path d="M1 1.500l10 9.500M12 1.500l-10 9.500" stroke="#666" stroke-width="2"/><path d="M1 1.500l3 0.500M12 1.500l-3 0.500" stroke="#888" stroke-width="2.200"/></svg>
<div class="r" style="left:1458px;top:627.05px;width:3.6px;height:3.8px;background:#111;border-radius:1.500px;"></div>
<svg class="r" style="left:1478.5px;top:619.75px;" width="7" height="14" viewBox="0 0 7 14"><rect x="1" y="1.500" width="5" height="8" rx="2.500" fill="#ddd" stroke="#555" stroke-width="0.700"/><path d="M1 3h5M1 5h5M1 7h5" stroke="#333" stroke-width="0.600"/><path d="M3.500 10v3M1.500 13.500h4" stroke="#444" stroke-width="1"/></svg>
<div class="r" style="left:1597px;top:1px;width:1.4px;height:634px;background:#f2f6fb;"></div>
<div class="r" style="left:1598.3px;top:1px;width:0.8px;height:634px;background:#9cc4ea;"></div>
<div class="r" style="left:1599px;top:0px;width:1px;height:635px;background:#2b6aa8;"></div>
</body></html>
